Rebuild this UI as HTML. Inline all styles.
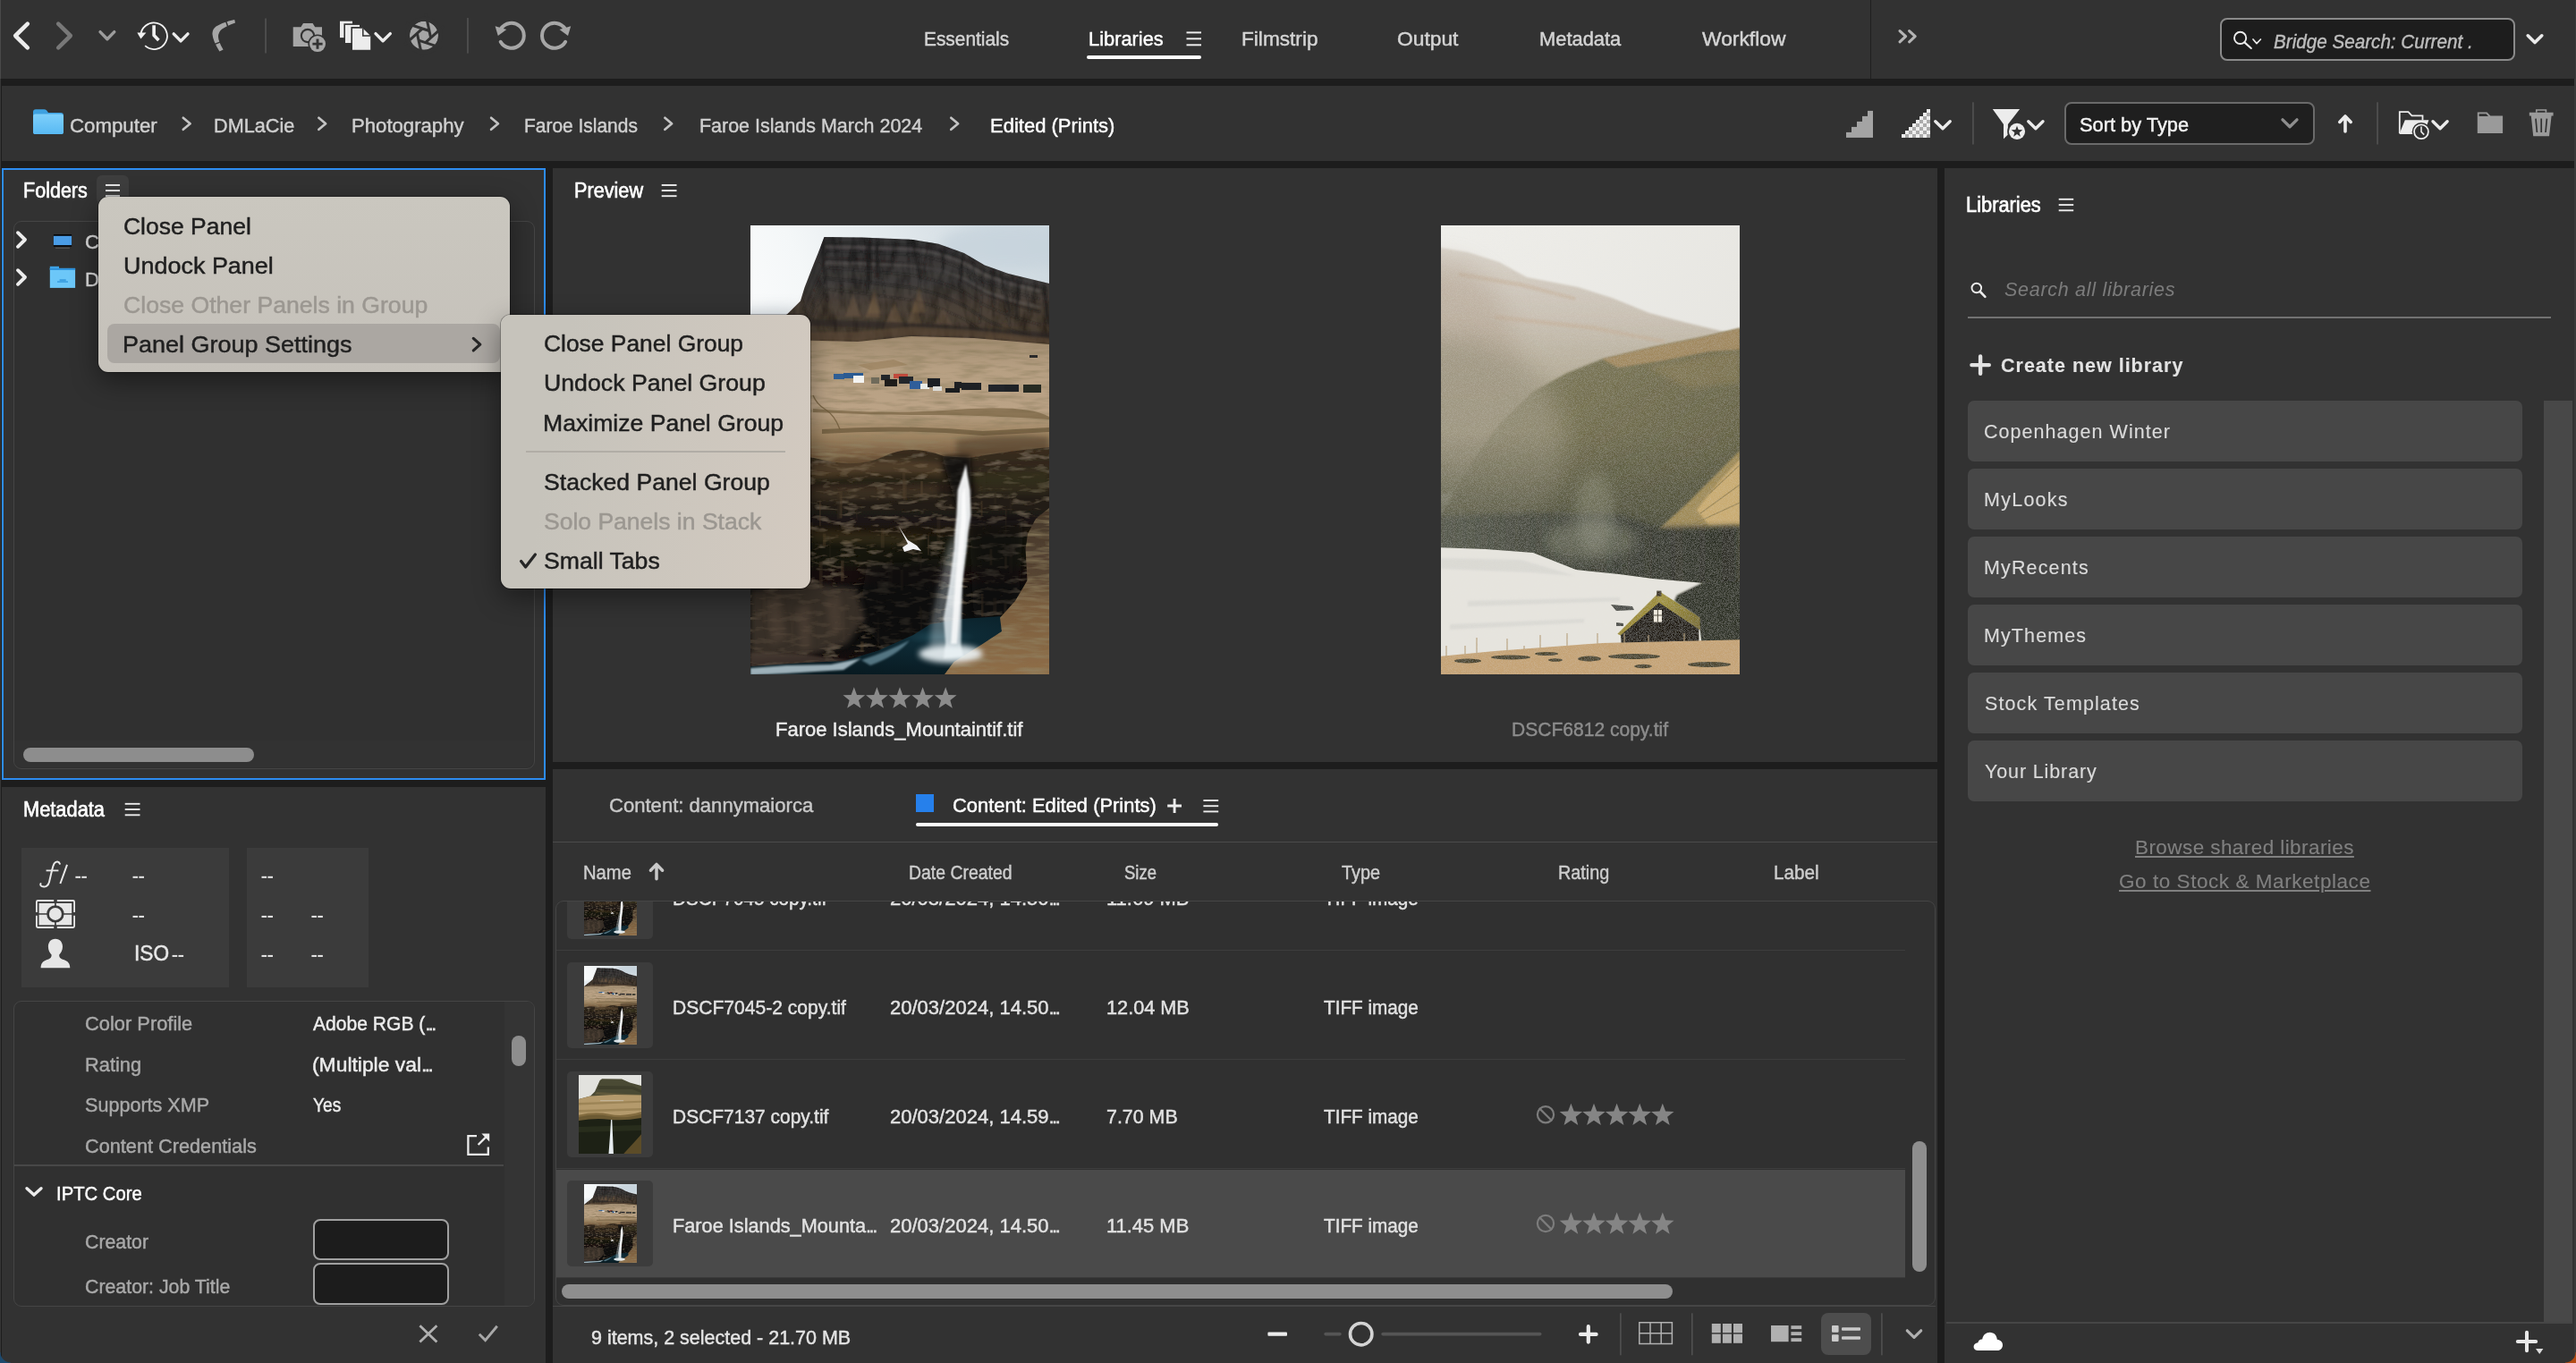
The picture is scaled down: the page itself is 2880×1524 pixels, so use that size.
<!DOCTYPE html><html lang="en"><head><meta charset="utf-8"><title>Adobe Bridge</title><style>
*{box-sizing:border-box;margin:0;padding:0}
html,body{width:2880px;height:1524px;overflow:hidden;background:#1d1d1d;font-family:"Liberation Sans",sans-serif;}
#app{position:absolute;left:0;top:0;width:2880px;height:1524px;overflow:hidden;background:#1d1d1d}
.b{position:absolute}
.p{position:absolute;background:#323232}
.t{position:absolute;white-space:nowrap;line-height:1;transform-origin:0 0;display:block}
.thumb{position:absolute;left:13px;width:96.2px;height:96px;background:#3c3c3c;border-radius:5px}
.sep{position:absolute;left:0;width:1508.5px;height:1.6px;background:#3d3d3d}
.lib{position:absolute;left:2200px;width:620px;height:67.6px;background:#474747;border-radius:7px}
</style></head><body><div id="app">
<div class="b" style="left:0;top:0;width:1.1px;height:1524px;background:#363636"></div>
<div class="b" style="left:2878.4px;top:0;width:1.6px;height:1524px;background:#3a3a3a"></div>
<div class="p" style="left:1.2px;top:0;width:2877.4px;height:88px"></div>
<div class="b" style="left:0;top:0;width:1.1px;height:88px;background:#494949"></div>
<div class="b" style="left:2090.6px;top:0;width:1.4px;height:88px;background:#1f1f1f"></div>
<div class="p" style="left:2px;top:96px;width:2876.4px;height:84px"></div>
<div class="b" style="left:2482px;top:20px;width:330px;height:47.6px;border:2px solid #8a8a8a;border-radius:8px;background:#1d1d1d"></div>
<div class="b" style="left:2308px;top:114.4px;width:280px;height:47.4px;border:2.2px solid #6a6a6a;border-radius:8px;background:#1f1f1f"></div>
<div class="b" style="left:1215px;top:62px;width:127.8px;height:4.2px;border-radius:2.1px;background:#fff"></div>
<div class="p" style="left:2px;top:188px;width:608.4px;height:684px;border:2.3px solid #2d8cf0"></div>
<div class="b" style="left:108.4px;top:196px;width:35.6px;height:31.5px;border-radius:6px;background:#3e3e3e"></div>
<div class="b" style="left:14.5px;top:246.5px;width:583.5px;height:613px;border:1.7px solid #454545;border-radius:9px;background:#303030"></div>
<div class="b" style="left:16px;top:828px;width:580px;height:30px;background:#323232;border-radius:0 0 8px 8px"></div>
<div class="b" style="left:25.7px;top:835.8px;width:258.5px;height:16.2px;border-radius:8.1px;background:#8d8d8d"></div>
<div class="p" style="left:1.6px;top:880px;width:608.8px;height:644px"></div>
<div class="b" style="left:24.3px;top:948.2px;width:231.6px;height:155.5px;background:#3b3b3b"></div>
<div class="b" style="left:276.2px;top:948.2px;width:135.8px;height:155.5px;background:#3b3b3b"></div>
<div class="b" style="left:14.5px;top:1119.2px;width:583.5px;height:342px;border:1.7px solid #454545;border-radius:9px;background:#303030;overflow:hidden"><div class="b" style="left:548.6px;top:0;width:34px;height:342px;background:#343434"></div></div>
<div class="b" style="left:16px;top:1301.9px;width:546.6px;height:1.7px;background:#484848"></div>
<div class="b" style="left:572px;top:1158px;width:15.8px;height:33.6px;border-radius:7.9px;background:#8d8d8d"></div>
<div class="b" style="left:350px;top:1362.5px;width:151.8px;height:46.6px;border:2px solid #a0a0a0;border-radius:8px;background:#1c1c1c"></div>
<div class="b" style="left:350px;top:1412.4px;width:151.8px;height:46.8px;border:2px solid #a0a0a0;border-radius:8px;background:#1c1c1c"></div>
<div class="p" style="left:618.2px;top:188px;width:1547.8px;height:664px"></div>
<svg width="0" height="0" style="position:absolute"><defs><linearGradient id="p1sky" x1="0" y1="0.6" x2="1" y2="0"><stop offset="0" stop-color="#ffffff"/><stop offset="0.35" stop-color="#f4f7f8"/><stop offset="0.7" stop-color="#dbe3e8"/><stop offset="1" stop-color="#cdd8df"/></linearGradient><linearGradient id="p1mt" x1="0" y1="0" x2="0" y2="1"><stop offset="0" stop-color="#343335"/><stop offset="0.4" stop-color="#413e3c"/><stop offset="0.65" stop-color="#4c4238"/><stop offset="0.88" stop-color="#453a30"/><stop offset="1" stop-color="#65523c"/></linearGradient><linearGradient id="p1fd" x1="0" y1="0" x2="0" y2="1"><stop offset="0" stop-color="#a08b70"/><stop offset="0.25" stop-color="#b7a083"/><stop offset="0.55" stop-color="#bba386"/><stop offset="0.75" stop-color="#9f8563"/><stop offset="0.9" stop-color="#775c40"/><stop offset="1" stop-color="#483726"/></linearGradient><linearGradient id="p1cl" x1="0" y1="0" x2="0" y2="1"><stop offset="0" stop-color="#3a2e20"/><stop offset="0.15" stop-color="#272017"/><stop offset="0.4" stop-color="#191510"/><stop offset="0.7" stop-color="#0e0d0b"/><stop offset="1" stop-color="#13110e"/></linearGradient><linearGradient id="p1rc" x1="0" y1="0" x2="0" y2="1"><stop offset="0" stop-color="#46382b"/><stop offset="0.4" stop-color="#564433"/><stop offset="0.58" stop-color="#7a5e3f"/><stop offset="1" stop-color="#8f6e48"/></linearGradient><linearGradient id="p1wf" x1="0" y1="0" x2="0" y2="1"><stop offset="0" stop-color="#ffffff" stop-opacity="0.95"/><stop offset="0.5" stop-color="#eef3f6" stop-opacity="0.9"/><stop offset="1" stop-color="#dfe9ee" stop-opacity="0.75"/></linearGradient><radialGradient id="p1sea" cx="0.72" cy="0.35" r="0.7"><stop offset="0" stop-color="#1e4552"/><stop offset="0.2" stop-color="#0e2a35"/><stop offset="1" stop-color="#081a21"/></radialGradient><filter id="b1" x="-20%" y="-20%" width="140%" height="140%"><feGaussianBlur stdDeviation="1.2"/></filter><filter id="b07" x="-5%" y="-5%" width="110%" height="110%"><feGaussianBlur stdDeviation="0.8"/></filter><filter id="b2" x="-30%" y="-30%" width="160%" height="160%"><feGaussianBlur stdDeviation="3"/></filter><filter id="b6" x="-40%" y="-40%" width="180%" height="180%"><feGaussianBlur stdDeviation="7"/></filter><filter id="b12" x="-50%" y="-50%" width="200%" height="200%"><feGaussianBlur stdDeviation="14"/></filter><filter id="rock" x="0" y="0" width="100%" height="100%"><feTurbulence type="fractalNoise" baseFrequency="0.09 0.035" numOctaves="3" seed="7" result="n"/><feColorMatrix in="n" type="matrix" values="0 0 0 0 0  0 0 0 0 0  0 0 0 0 0  1.3 0 0 0 -0.5" result="a"/><feComposite in="a" in2="SourceGraphic" operator="in" result="d"/><feMerge><feMergeNode in="SourceGraphic"/><feMergeNode in="d"/></feMerge></filter><filter id="rockl" x="0" y="0" width="100%" height="100%"><feTurbulence type="fractalNoise" baseFrequency="0.05 0.16" numOctaves="3" seed="11" result="n"/><feColorMatrix in="n" type="matrix" values="0 0 0 0 0.38  0 0 0 0 0.30  0 0 0 0 0.21  1.0 0 0 0 -0.52" result="a"/><feComposite in="a" in2="SourceGraphic" operator="in" result="d"/><feMerge><feMergeNode in="SourceGraphic"/><feMergeNode in="d"/></feMerge></filter><filter id="grass" x="0" y="0" width="100%" height="100%"><feTurbulence type="fractalNoise" baseFrequency="0.03 0.2" numOctaves="3" seed="3" result="n"/><feColorMatrix in="n" type="matrix" values="0 0 0 0 0.28  0 0 0 0 0.22  0 0 0 0 0.12  1.7 0 0 0 -0.7" result="a"/><feComposite in="a" in2="SourceGraphic" operator="in" result="d"/><feMerge><feMergeNode in="SourceGraphic"/><feMergeNode in="d"/></feMerge></filter><filter id="grain" x="0" y="0" width="100%" height="100%"><feTurbulence type="fractalNoise" baseFrequency="1.3" numOctaves="2" seed="5" result="n"/><feColorMatrix in="n" type="matrix" values="0 0 0 0 0.8  0 0 0 0 0.8  0 0 0 0 0.75  0.32 0 0 0 -0.11" result="a"/><feComposite in="a" in2="SourceGraphic" operator="in" result="d"/><feMerge><feMergeNode in="SourceGraphic"/><feMergeNode in="d"/></feMerge></filter><symbol id="ph1" viewBox="0 0 334 502" preserveAspectRatio="none"><rect width="334" height="502" fill="url(#p1sky)"/><ellipse cx="30" cy="112" rx="55" ry="20" fill="#e4eaee" filter="url(#b6)"/><ellipse cx="290" cy="24" rx="80" ry="26" fill="#c6d3dc" filter="url(#b6)" opacity="0.8"/><g filter="url(#rock)"><path d="M0,131 L22,112 L41.5,99 L56,84.5 L60.6,69.3 L71,42.6 L77.8,25.4 L82.5,13 L124.5,13.6 L181.7,15.9 L210.3,20.7 L238.9,31.1 L261.8,44.5 L288.5,54 L334,65.1 L334,140 L0,140 Z" fill="url(#p1mt)"/></g><clipPath id="mtclip"><path d="M0,131 L22,112 L41.5,99 L56,84.5 L60.6,69.3 L71,42.6 L77.8,25.4 L82.5,13 L124.5,13.6 L181.7,15.9 L210.3,20.7 L238.9,31.1 L261.8,44.5 L288.5,54 L334,65.1 L334,132 L0,132 Z"/></clipPath><g clip-path="url(#mtclip)"><g filter="url(#b07)"><path d="M60,78.3 L72,47.1 L84,20.0 L96,20.2 L108,20.4 L120,20.5 L132,20.9 L144,21.4 L156,21.9 L168,22.3 L180,22.8 L192,24.6 L204,26.6 L216,29.8 L228,34.1 L240,38.7 L252,45.8 L264,52.3 L276,56.6 L288,60.8 L300,63.8 L312,66.7 L324,69.7" stroke="#1d1c1c" stroke-width="2.2" fill="none" opacity="0.55"/><path d="M60,85.8 L72,54.9 L84,28.1 L96,28.5 L108,28.9 L120,29.3 L132,29.9 L144,30.6 L156,31.3 L168,32.1 L180,32.8 L192,34.8 L204,37.1 L216,40.5 L228,45.1 L240,49.9 L252,57.2 L264,63.9 L276,68.4 L288,72.9 L300,76.2 L312,79.3 L324,82.5" stroke="#1d1c1c" stroke-width="1.6" fill="none" opacity="0.45"/><path d="M60,94.4 L72,63.7 L84,37.1 L96,37.8 L108,38.4 L120,39.1 L132,39.9 L144,40.9 L156,41.8 L168,42.8 L180,43.8 L192,46.0 L204,48.5 L216,52.1 L228,57.0 L240,62.1 L252,69.6 L264,76.6 L276,81.3 L288,86.1 L300,89.5 L312,92.9 L324,96.3" stroke="#1d1c1c" stroke-width="2.6" fill="none" opacity="0.5"/><path d="M60,104.0 L72,73.5 L84,47.1 L96,48.0 L108,48.9 L120,49.8 L132,50.9 L144,52.1 L156,53.3 L168,54.5 L180,55.7 L192,58.2 L204,61.0 L216,64.8 L228,69.9 L240,75.2 L252,83.0 L264,90.2 L276,95.2 L288,100.2 L300,103.9 L312,107.5 L324,111.2" stroke="#1d1c1c" stroke-width="1.8" fill="none" opacity="0.4"/><path d="M60,115.5 L72,85.3 L84,59.2 L96,60.3 L108,61.4 L120,62.6 L132,63.9 L144,65.3 L156,66.8 L168,68.2 L180,69.7 L192,72.4 L204,75.4 L216,79.5 L228,84.8 L240,90.4 L252,98.4 L264,105.8 L276,111.1 L288,116.3 L300,120.2 L312,124.1 L324,128.0" stroke="#1d1c1c" stroke-width="2.4" fill="none" opacity="0.45"/><path d="M60,127.1 L72,97.1 L84,71.2 L96,72.6 L108,74.0 L120,75.3 L132,76.9 L144,78.6 L156,80.3 L168,81.9 L180,83.6 L192,86.6 L204,89.8 L216,94.2 L228,99.7 L240,105.5 L252,113.8 L264,121.5 L276,127.0 L288,132.4 L300,136.6 L312,140.7 L324,144.9" stroke="#1d1c1c" stroke-width="1.6" fill="none" opacity="0.35"/><path d="M84,24.0 L96,24.2 L108,24.4 L120,24.5 L132,24.9 L144,25.4 L156,25.9 L168,26.3 L180,26.8 L192,28.6 L204,30.6 L216,33.8 L228,38.1 L240,42.7 L252,49.8 L264,56.3 L276,60.6 L288,64.8 L300,67.8 L312,70.7 L324,73.7" stroke="#77736f" stroke-width="3" fill="none" opacity="0.35"/><path d="M84,42.0 L96,42.2 L108,42.4 L120,42.5 L132,42.9 L144,43.4 L156,43.9 L168,44.3 L180,44.8 L192,46.6 L204,48.6 L216,51.8 L228,56.1 L240,60.7 L252,67.8 L264,74.3 L276,78.6 L288,82.8 L300,85.8 L312,88.7 L324,91.7" stroke="#77736f" stroke-width="3" fill="none" opacity="0.3"/><path d="M237.7,31.8 L235.3,61.4" stroke="#1b1a1a" stroke-width="2.7" opacity="0.50" stroke-linecap="round"/><path d="M302.4,59.0 L296.9,94.7" stroke="#1b1a1a" stroke-width="1.6" opacity="0.45" stroke-linecap="round"/><path d="M80.8,19.9 L83.5,65.2" stroke="#1b1a1a" stroke-width="1.6" opacity="0.48" stroke-linecap="round"/><path d="M281.2,52.5 L286.4,104.3" stroke="#1b1a1a" stroke-width="1.9" opacity="0.35" stroke-linecap="round"/><path d="M319.0,64.8 L314.6,86.7" stroke="#1b1a1a" stroke-width="2.9" opacity="0.48" stroke-linecap="round"/><path d="M280.6,57.3 L290.2,97.8" stroke="#1b1a1a" stroke-width="2.0" opacity="0.47" stroke-linecap="round"/><path d="M286.3,58.6 L289.6,112.7" stroke="#1b1a1a" stroke-width="2.6" opacity="0.31" stroke-linecap="round"/><path d="M132.3,16.9 L130.1,38.3" stroke="#1b1a1a" stroke-width="1.4" opacity="0.38" stroke-linecap="round"/><path d="M236.7,33.9 L234.1,67.4" stroke="#1b1a1a" stroke-width="1.7" opacity="0.58" stroke-linecap="round"/><path d="M239.9,36.9 L245.6,62.1" stroke="#1b1a1a" stroke-width="1.5" opacity="0.41" stroke-linecap="round"/><path d="M327.3,68.9 L332.3,110.3" stroke="#1b1a1a" stroke-width="2.9" opacity="0.53" stroke-linecap="round"/><path d="M132.6,15.2 L130.9,46.4" stroke="#1b1a1a" stroke-width="1.6" opacity="0.58" stroke-linecap="round"/><path d="M298.4,59.6 L298.7,105.1" stroke="#1b1a1a" stroke-width="3.0" opacity="0.44" stroke-linecap="round"/><path d="M141.8,17.0 L140.0,58.6" stroke="#1b1a1a" stroke-width="2.4" opacity="0.57" stroke-linecap="round"/><path d="M176.2,18.2 L178.4,78.1" stroke="#1b1a1a" stroke-width="1.4" opacity="0.31" stroke-linecap="round"/><path d="M102.1,18.7 L102.8,69.9" stroke="#1b1a1a" stroke-width="1.3" opacity="0.41" stroke-linecap="round"/><path d="M329.0,68.6 L336.8,127.4" stroke="#1b1a1a" stroke-width="1.2" opacity="0.52" stroke-linecap="round"/><path d="M248.5,41.5 L252.8,70.7" stroke="#1b1a1a" stroke-width="1.4" opacity="0.43" stroke-linecap="round"/><path d="M190.2,25.0 L188.4,79.8" stroke="#1b1a1a" stroke-width="2.2" opacity="0.35" stroke-linecap="round"/><path d="M307.6,65.8 L311.9,96.3" stroke="#1b1a1a" stroke-width="2.4" opacity="0.35" stroke-linecap="round"/><path d="M269.2,51.9 L271.7,102.6" stroke="#1b1a1a" stroke-width="1.2" opacity="0.40" stroke-linecap="round"/><path d="M79.0,29.8 L86.3,84.7" stroke="#1b1a1a" stroke-width="1.8" opacity="0.32" stroke-linecap="round"/><path d="M298.8,64.1 L300.5,85.7" stroke="#1b1a1a" stroke-width="1.3" opacity="0.53" stroke-linecap="round"/><path d="M270.1,49.3 L272.9,87.3" stroke="#1b1a1a" stroke-width="1.7" opacity="0.56" stroke-linecap="round"/><path d="M182.3,18.5 L188.0,59.1" stroke="#1b1a1a" stroke-width="1.6" opacity="0.39" stroke-linecap="round"/><path d="M328.8,69.4 L331.0,105.8" stroke="#1b1a1a" stroke-width="1.4" opacity="0.37" stroke-linecap="round"/><path d="M160.5,20.2 L158.1,47.8" stroke="#1b1a1a" stroke-width="1.3" opacity="0.49" stroke-linecap="round"/><path d="M132.6,21.3 L127.7,75.4" stroke="#1b1a1a" stroke-width="1.7" opacity="0.50" stroke-linecap="round"/><path d="M128.8,15.7 L132.0,73.0" stroke="#1b1a1a" stroke-width="2.1" opacity="0.54" stroke-linecap="round"/><path d="M280.7,53.6 L281.6,75.6" stroke="#1b1a1a" stroke-width="2.0" opacity="0.44" stroke-linecap="round"/><path d="M260.6,49.5 L256.2,108.9" stroke="#1b1a1a" stroke-width="2.0" opacity="0.40" stroke-linecap="round"/><path d="M294.6,58.2 L295.8,84.2" stroke="#1b1a1a" stroke-width="2.0" opacity="0.38" stroke-linecap="round"/><path d="M138.0,21.6 L145.7,58.2" stroke="#1b1a1a" stroke-width="2.3" opacity="0.32" stroke-linecap="round"/><path d="M329.8,70.9 L338.6,129.6" stroke="#1b1a1a" stroke-width="2.9" opacity="0.35" stroke-linecap="round"/><path d="M198.3,21.2 L193.3,56.0" stroke="#1b1a1a" stroke-width="2.0" opacity="0.60" stroke-linecap="round"/><path d="M141.9,20.8 L142.7,57.9" stroke="#1b1a1a" stroke-width="3.1" opacity="0.60" stroke-linecap="round"/><path d="M216.3,28.9 L215.0,53.4" stroke="#1b1a1a" stroke-width="3.1" opacity="0.47" stroke-linecap="round"/><path d="M212.8,27.8 L216.1,48.2" stroke="#1b1a1a" stroke-width="2.2" opacity="0.56" stroke-linecap="round"/><path d="M114.3,21.2 L111.3,42.5" stroke="#1b1a1a" stroke-width="2.4" opacity="0.50" stroke-linecap="round"/><path d="M134.2,15.8 L132.2,71.2" stroke="#1b1a1a" stroke-width="2.4" opacity="0.49" stroke-linecap="round"/><path d="M181.3,21.0 L190.3,60.9" stroke="#1b1a1a" stroke-width="1.6" opacity="0.51" stroke-linecap="round"/><path d="M135.1,17.8 L133.9,64.0" stroke="#1b1a1a" stroke-width="1.8" opacity="0.53" stroke-linecap="round"/><path d="M92.6,17.4 L102.5,77.3" stroke="#1b1a1a" stroke-width="1.3" opacity="0.36" stroke-linecap="round"/><path d="M141.9,21.8 L150.0,76.8" stroke="#1b1a1a" stroke-width="1.9" opacity="0.35" stroke-linecap="round"/><path d="M287.4,59.5 L297.2,103.2" stroke="#1b1a1a" stroke-width="2.5" opacity="0.30" stroke-linecap="round"/><path d="M283.2,55.2 L292.2,101.1" stroke="#1b1a1a" stroke-width="1.5" opacity="0.33" stroke-linecap="round"/><path d="M114.6,77.6 L123.3,102.1 L106.0,102.1 Z" fill="#7d6548" opacity="0.34"/><path d="M136.8,80.0 L145.4,102.9 L128.2,102.9 Z" fill="#7d6548" opacity="0.38"/><path d="M284.6,106.6 L294.1,126.5 L275.1,126.5 Z" fill="#7d6548" opacity="0.20"/><path d="M267.4,112.5 L275.9,138.9 L258.8,138.9 Z" fill="#7d6548" opacity="0.31"/><path d="M188.4,69.2 L195.8,97.6 L180.9,97.6 Z" fill="#7d6548" opacity="0.38"/><path d="M215.5,92.9 L226.0,111.0 L205.0,111.0 Z" fill="#7d6548" opacity="0.23"/><path d="M160.9,86.8 L172.7,114.9 L149.1,114.9 Z" fill="#7d6548" opacity="0.38"/><path d="M138.3,71.6 L145.9,98.6 L130.7,98.6 Z" fill="#7d6548" opacity="0.38"/><path d="M183.5,81.9 L191.4,110.9 L175.5,110.9 Z" fill="#7d6548" opacity="0.37"/></g></g><path d="M56,104 L200,110 L334,120 L334,127 L200,117 L56,112 Z" fill="#262422" opacity="0.55" filter="url(#b1)"/><g filter="url(#grass)"><path d="M0,133 L40,128 L120,130 L180,124 L250,126 L334,133 L334,272 L0,272 Z" fill="url(#p1fd)"/></g><path d="M40,128 L120,129 L180,123 L250,125 L334,132 L334,126 L250,117 L180,113 L120,119 L40,120 Z" fill="#5e4c38" opacity="0.6" filter="url(#b1)"/><path d="M70,205 Q150,212 230,206 T334,214 L334,217 Q260,212 200,212 T70,209 Z" fill="#6e5a38" opacity="0.6"/><path d="M80,228 Q170,222 260,230 L334,226 L334,231 L260,235 Q170,227 80,233 Z" fill="#5e4c30" opacity="0.6"/><path d="M70,190 Q74,200 84,206 T100,228" stroke="#6e5a3a" stroke-width="1.4" fill="none" opacity="0.8"/><path d="M120,156 L160,150 L176,156 L134,162 Z" fill="#8f7550" opacity="0.5"/><path d="M230,240 Q280,232 334,236 L334,262 L230,262 Z" fill="#4a3826" opacity="0.55" filter="url(#b2)"/><rect x="93" y="166" width="12" height="6" fill="#2f5f96"/><rect x="104" y="165" width="22" height="6" fill="#2a5a92"/><rect x="115" y="168" width="12" height="8" fill="#f4f4f2"/><rect x="135" y="170" width="9" height="7" fill="#6f6a5a"/><rect x="146" y="167" width="10" height="6" fill="#22262a"/><rect x="150" y="172" width="14" height="8" fill="#1f1c1a"/><rect x="160" y="166" width="16" height="5" fill="#c04a3c"/><rect x="166" y="169" width="16" height="8" fill="#23262b"/><rect x="178" y="174" width="14" height="9" fill="#2f5e9a"/><rect x="190" y="177" width="10" height="6" fill="#e9ece8"/><rect x="198" y="171" width="14" height="10" fill="#1c1f24"/><rect x="204" y="180" width="10" height="5" fill="#dcdcd8"/><rect x="218" y="182" width="16" height="5" fill="#1a1c1e"/><rect x="228" y="175" width="8" height="7" fill="#1d1f22"/><rect x="236" y="176" width="22" height="8" fill="#1e2024"/><rect x="266" y="178" width="18" height="8" fill="#22252a"/><rect x="284" y="178" width="16" height="8" fill="#1f2226"/><rect x="305" y="178" width="20" height="9" fill="#262a22"/><rect x="312" y="145" width="9" height="3" fill="#2a2a2a"/><g filter="url(#rockl)"><path d="M0,264 Q40,252 80,262 T150,258 T216,258 L244,260 Q290,252 334,248 L334,502 L0,502 Z" fill="url(#p1cl)"/></g><g><rect x="100.4" y="301.9" width="1.7" height="25.6" fill="#4a3b2a" opacity="0.38"/><rect x="18.0" y="372.5" width="2.6" height="10.9" fill="#4a3b2a" opacity="0.33"/><rect x="170.8" y="283.7" width="3.9" height="23.6" fill="#4a3b2a" opacity="0.45"/><rect x="123.0" y="465.3" width="3.6" height="11.1" fill="#55432e" opacity="0.40"/><rect x="167.6" y="385.0" width="3.2" height="23.4" fill="#4a3b2a" opacity="0.45"/><rect x="198.1" y="345.7" width="1.7" height="23.1" fill="#4a3b2a" opacity="0.47"/><rect x="153.9" y="377.3" width="2.7" height="28.7" fill="#2e261d" opacity="0.38"/><rect x="77.0" y="307.6" width="1.7" height="28.7" fill="#55432e" opacity="0.43"/><rect x="271.3" y="416.4" width="4.0" height="16.9" fill="#4a3b2a" opacity="0.43"/><rect x="51.1" y="339.7" width="2.6" height="32.4" fill="#4a3b2a" opacity="0.52"/><rect x="177.6" y="445.3" width="3.2" height="17.5" fill="#2e261d" opacity="0.45"/><rect x="141.4" y="438.3" width="2.7" height="32.7" fill="#4a3b2a" opacity="0.27"/><rect x="88.2" y="348.4" width="1.6" height="26.0" fill="#2e261d" opacity="0.37"/><rect x="189.4" y="369.8" width="2.2" height="15.2" fill="#3c3024" opacity="0.39"/><rect x="284.2" y="370.3" width="2.5" height="14.0" fill="#55432e" opacity="0.56"/><rect x="254.0" y="443.1" width="2.5" height="16.7" fill="#55432e" opacity="0.49"/><rect x="117.9" y="317.7" width="1.9" height="12.0" fill="#3c3024" opacity="0.25"/><rect x="257.6" y="308.1" width="1.9" height="16.8" fill="#55432e" opacity="0.46"/><rect x="98.8" y="296.8" width="3.9" height="30.6" fill="#4a3b2a" opacity="0.41"/><rect x="270.0" y="460.5" width="2.9" height="26.3" fill="#2e261d" opacity="0.39"/><rect x="32.1" y="397.6" width="1.7" height="11.5" fill="#3c3024" opacity="0.40"/><rect x="34.1" y="390.9" width="2.9" height="12.5" fill="#4a3b2a" opacity="0.58"/><rect x="190.3" y="285.9" width="2.4" height="15.0" fill="#55432e" opacity="0.58"/><rect x="186.7" y="365.9" width="2.7" height="12.8" fill="#2e261d" opacity="0.42"/><rect x="96.7" y="300.5" width="3.4" height="28.0" fill="#2e261d" opacity="0.54"/><rect x="50.0" y="276.6" width="2.8" height="32.8" fill="#3c3024" opacity="0.49"/><rect x="283.4" y="422.1" width="3.1" height="17.2" fill="#4a3b2a" opacity="0.49"/><rect x="80.9" y="344.6" width="3.4" height="14.0" fill="#55432e" opacity="0.47"/><rect x="190.1" y="428.1" width="2.0" height="28.2" fill="#3c3024" opacity="0.54"/><rect x="9.0" y="277.5" width="2.1" height="16.7" fill="#55432e" opacity="0.41"/><rect x="290.5" y="467.6" width="2.4" height="32.9" fill="#3c3024" opacity="0.29"/><rect x="145.7" y="338.9" width="4.0" height="21.6" fill="#4a3b2a" opacity="0.42"/><rect x="202.4" y="430.3" width="3.2" height="12.0" fill="#2e261d" opacity="0.52"/><rect x="103.1" y="430.6" width="2.5" height="33.3" fill="#2e261d" opacity="0.51"/><rect x="26.3" y="303.5" width="1.6" height="33.8" fill="#2e261d" opacity="0.53"/><rect x="45.3" y="435.6" width="3.1" height="33.5" fill="#55432e" opacity="0.30"/><rect x="170.0" y="276.2" width="3.3" height="29.2" fill="#4a3b2a" opacity="0.43"/><rect x="289.4" y="357.9" width="3.6" height="30.9" fill="#3c3024" opacity="0.26"/><rect x="66.0" y="371.2" width="2.3" height="28.3" fill="#2e261d" opacity="0.54"/><rect x="18.9" y="418.5" width="3.2" height="31.5" fill="#2e261d" opacity="0.54"/><rect x="272.2" y="297.9" width="2.8" height="13.6" fill="#2e261d" opacity="0.52"/><rect x="188.7" y="425.7" width="1.9" height="13.6" fill="#4a3b2a" opacity="0.44"/><rect x="101.1" y="374.6" width="3.5" height="23.3" fill="#4a3b2a" opacity="0.56"/><rect x="17.6" y="309.9" width="1.7" height="11.0" fill="#2e261d" opacity="0.45"/><rect x="156.7" y="373.4" width="2.6" height="26.6" fill="#2e261d" opacity="0.43"/><rect x="76.8" y="375.6" width="3.8" height="31.0" fill="#3c3024" opacity="0.54"/><rect x="42.5" y="296.1" width="1.7" height="20.6" fill="#3c3024" opacity="0.40"/><rect x="65.9" y="332.0" width="3.4" height="12.9" fill="#55432e" opacity="0.30"/><rect x="273.7" y="463.6" width="3.9" height="15.3" fill="#2e261d" opacity="0.56"/><rect x="50.5" y="404.2" width="3.3" height="15.4" fill="#2e261d" opacity="0.37"/><rect x="60.7" y="335.1" width="1.5" height="27.3" fill="#2e261d" opacity="0.40"/><rect x="5.6" y="337.6" width="2.8" height="25.0" fill="#4a3b2a" opacity="0.29"/><rect x="284.7" y="317.3" width="1.7" height="31.0" fill="#55432e" opacity="0.26"/><rect x="282.5" y="434.2" width="1.9" height="16.2" fill="#2e261d" opacity="0.50"/><rect x="27.7" y="283.4" width="2.6" height="26.5" fill="#4a3b2a" opacity="0.34"/><rect x="5.2" y="289.5" width="3.0" height="16.3" fill="#3c3024" opacity="0.27"/><rect x="267.5" y="361.8" width="2.9" height="18.1" fill="#55432e" opacity="0.47"/><rect x="13.4" y="412.5" width="3.9" height="32.5" fill="#55432e" opacity="0.27"/><rect x="62.5" y="333.8" width="3.4" height="17.3" fill="#55432e" opacity="0.41"/><rect x="208.4" y="325.6" width="4.0" height="29.3" fill="#4a3b2a" opacity="0.26"/><rect x="289.7" y="293.0" width="2.6" height="29.7" fill="#2e261d" opacity="0.44"/><rect x="275.5" y="464.1" width="2.0" height="17.4" fill="#3c3024" opacity="0.37"/><rect x="258.0" y="411.9" width="2.5" height="25.3" fill="#55432e" opacity="0.59"/><rect x="259.5" y="274.8" width="3.7" height="25.0" fill="#2e261d" opacity="0.31"/></g><path d="M68,266 Q150,258 214,266 L214,280 Q150,274 68,284 Z" fill="#6a5236" opacity="0.5" filter="url(#b2)"/><path d="M68,292 L210,290 L210,304 L68,308 Z" fill="#54442f" opacity="0.45" filter="url(#b2)"/><path d="M68,340 L190,346 L190,358 L68,354 Z" fill="#4c3c24" opacity="0.45" filter="url(#b2)"/><path d="M250,276 L334,270 L334,300 L252,300 Z" fill="#3c3b22" opacity="0.45" filter="url(#b2)"/><path d="M214,258 L246,258 L248,300 L236,330 L226,300 Z" fill="#0c0b0a" opacity="0.8" filter="url(#b2)"/><path d="M130,380 L215,372 L205,470 L150,475 L120,440 Z" fill="#090909" opacity="0.7" filter="url(#b6)"/><path d="M244,330 L305,330 L300,430 L250,440 Z" fill="#0b0b0b" opacity="0.6" filter="url(#b6)"/><path d="M0,408 L60,400 L118,406 L128,440 L108,468 L60,482 L0,486 Z" fill="#42372f" opacity="0.8" filter="url(#b2)"/><path d="M18,420 L32,414 L40,462 L24,470 Z M84,418 L100,414 L104,452 L90,460 Z M52,428 L66,424 L68,472 L56,474 Z" fill="#5e4e40" opacity="0.4" filter="url(#b2)"/><path d="M0,478 L60,480 L110,486 L60,492 L0,494 Z" fill="#4a3c34" opacity="0.7" filter="url(#b1)"/><path d="M0,493 L60,489 L105,487 L144,475 L182,458 L201,446 L237,440 L280,437 L292,452 L262,472 L230,490 L217,503 L0,503 Z" fill="url(#p1sea)"/><path d="M0,495 L40,492 L90,491 L124,484 L104,497 L40,501 L0,503 Z" fill="#cfe3ec" opacity="0.75" filter="url(#b1)"/><path d="M124,486 Q152,477 178,464 Q164,481 134,492 Z" fill="#8fb8c8" opacity="0.55" filter="url(#b1)"/><g filter="url(#grass)"><path d="M334,316 L319,328 L310,345 L307.6,362 L309.5,397 L296,420 L279,438.7 L281,454 L258,469 L227.5,488 L217,502 L334,502 Z" fill="url(#p1rc)"/></g><path d="M203,440 L212,400 L220,362 L228,344 L232,400 L224,470 L200,474 Z" fill="#cfdde4" opacity="0.35" filter="url(#b2)"/><path d="M240.9,267 L242.8,280 L245.6,296 L246.6,324 L243.7,343 L241.8,362 L237,400 L236,439 L235.4,470 L238,482 L216,484 L218,467 L216,439 L222.7,400 L227.5,362 L228.5,343 L230.4,324 L231.7,296 L237,280 Z" fill="url(#p1wf)" filter="url(#b1)"/><path d="M240,292 L241.4,330 L236,400 L231,468 L224,468 L229,400 L235.4,330 L236.5,300 Z" fill="#ffffff" opacity="0.8" filter="url(#b1)"/><ellipse cx="224" cy="479" rx="36" ry="10" fill="#eef5f8" opacity="0.9" filter="url(#b2)"/><path d="M166,337 L176,352 L186,358 L191,364 L182,362 L172,365 L170,360 L176,356 Z" fill="#f2f2f4"/></symbol><linearGradient id="p2sky" x1="0" y1="0" x2="1" y2="1"><stop offset="0" stop-color="#efeeea"/><stop offset="1" stop-color="#e2e1dc"/></linearGradient><linearGradient id="p2far" x1="0" y1="0" x2="0" y2="1"><stop offset="0" stop-color="#d9d3ca"/><stop offset="0.3" stop-color="#c9c0b3"/><stop offset="0.6" stop-color="#aea58f"/><stop offset="1" stop-color="#8f8c6f"/></linearGradient><linearGradient id="p2hill" x1="0" y1="0" x2="1" y2="1"><stop offset="0" stop-color="#8b866c"/><stop offset="0.35" stop-color="#767150"/><stop offset="0.7" stop-color="#656243"/><stop offset="1" stop-color="#57583c"/></linearGradient><linearGradient id="p2shore" x1="0" y1="0" x2="1" y2="0"><stop offset="0" stop-color="#55584a"/><stop offset="0.5" stop-color="#3c3f34"/><stop offset="1" stop-color="#282a20"/></linearGradient><linearGradient id="p2roof" x1="0" y1="0" x2="1" y2="1"><stop offset="0" stop-color="#a89a3e"/><stop offset="1" stop-color="#75682a"/></linearGradient><linearGradient id="p2haze" x1="0" y1="0" x2="1" y2="0"><stop offset="0" stop-color="#aaa38f" stop-opacity="0.75"/><stop offset="0.35" stop-color="#a19c86" stop-opacity="0.4"/><stop offset="0.7" stop-color="#a19c86" stop-opacity="0"/></linearGradient><linearGradient id="p2low" x1="0" y1="0" x2="0" y2="1"><stop offset="0" stop-color="#4c4f38" stop-opacity="0"/><stop offset="1" stop-color="#3f4230" stop-opacity="0.7"/></linearGradient><symbol id="ph2" viewBox="0 0 334 502" preserveAspectRatio="none"><g filter="url(#grain)"><rect width="334" height="502" fill="url(#p2sky)"/><path d="M-6,20 L0,25 L30,30 L65,41 L96,58 L153,69 L191,81 L233,98 L275,109 L313,118 L340,122 L340,300 L-6,300 Z" fill="url(#p2far)" filter="url(#b1)"/><path d="M20,52 L90,64 L150,80 L150,84 L90,69 L20,57 Z M60,100 L170,112 L250,128 L250,132 L170,117 L60,105 Z" fill="#c4ab92" opacity="0.45" filter="url(#b1)"/><ellipse cx="0" cy="160" rx="85" ry="120" fill="#b3a391" opacity="0.55" filter="url(#b12)"/><path d="M340,113 L334,115 L294,124.6 L237,136 L180,149.4 L141.6,164.7 L103.4,185.6 L65.3,222 L42.4,253 L20,290 L-6,335 L-6,400 L340,400 Z" fill="url(#p2hill)" filter="url(#b1)"/><ellipse cx="0" cy="250" rx="140" ry="125" fill="#9a937d" opacity="0.72" filter="url(#b12)"/><rect x="0" y="230" width="334" height="110" fill="url(#p2low)"/><path d="M334,115 L294,124.6 L237,136 L180,149.4 L198,159 L250,151 L300,141 L334,139 Z" fill="#ad9063" opacity="0.8" filter="url(#b1)"/><path d="M230,158 L334,140 L334,176 L276,182 Z" fill="#8f7e54" opacity="0.5" filter="url(#b2)"/><path d="M334,252 L302,284 L275,311 L243,340 L275,346 L334,338 Z" fill="#9f8a55" filter="url(#b1)"/><path d="M334,262 L308,290 L286,318 L300,336 L334,334 Z" fill="#c9ab70" filter="url(#b1)"/><path d="M334,268 L300,300 M334,290 L290,322 M334,310 L282,334" stroke="#8a7848" stroke-width="1.2" opacity="0.7"/><path d="M-6,326 L100,322 L200,324 L243,338 L334,336 L334,470 L-6,470 Z" fill="url(#p2shore)" filter="url(#b2)"/><ellipse cx="168" cy="352" rx="52" ry="22" fill="#84866f" opacity="0.5" filter="url(#b6)"/><ellipse cx="172" cy="322" rx="22" ry="44" fill="#a9a998" opacity="0.32" filter="url(#b6)"/><path d="M-4,360 L50,362 L103,366 L151,385 L199,390 L237,395 L294,400 L266,414 L279,425 L288,439 L292,470 L-4,484 Z" fill="#e6e4de"/><path d="M0,372 L90,374 L150,392 L100,388 L0,384 Z M30,420 L200,416 L200,420 L30,426 Z M10,446 L160,440 L160,444 L10,452 Z" fill="#cfcfca" opacity="0.5" filter="url(#b1)"/><path d="M190,424 L214,426 L216,430 L196,431 Z M196,444 L204,445 L204,448 L196,448 Z" fill="#4a4c46"/><path d="M294,399 L264,413.5 L261,420 L292,441 L292,472 L340,472 L340,398 Z" fill="#2b2d23" filter="url(#b1)"/><path d="M242.7,420.6 L200.7,455.4 L201.7,467.6 L288.4,465 L288.4,451 Z" fill="#1c190f"/><path d="M244.6,409.6 L289.6,438.4 L289.8,452.4 L243.4,421.4 Z" fill="url(#p2roof)"/><path d="M244.6,409.6 L197.4,456.8 L200.6,458.6 L243.6,422 Z" fill="#9c8c36"/><rect x="241.2" y="408.6" width="5.2" height="6" fill="#3a3122"/><rect x="237.8" y="430" width="9.2" height="13.6" fill="#efe9de"/><path d="M242.4,430 V443.6 M237.8,436 H247" stroke="#3a3326" stroke-width="0.9"/><path d="M-4,482 L60,476 L180,467 L340,463 L340,506 L-4,506 Z" fill="#c5a375"/><ellipse cx="30" cy="487" rx="15" ry="2.4" fill="#3c3822" opacity="0.9"/><ellipse cx="78" cy="483" rx="22" ry="2.4" fill="#3c3822" opacity="0.9"/><ellipse cx="118" cy="479" rx="13" ry="2" fill="#3c3822" opacity="0.9"/><ellipse cx="128" cy="486" rx="8" ry="1.8" fill="#3c3822" opacity="0.9"/><ellipse cx="166" cy="484.5" rx="13" ry="3" fill="#3c3822" opacity="0.9"/><ellipse cx="216" cy="482" rx="29" ry="3" fill="#3c3822" opacity="0.9"/><ellipse cx="226" cy="493" rx="10" ry="2.2" fill="#3c3822" opacity="0.9"/><ellipse cx="300" cy="491" rx="24" ry="3" fill="#3c3822" opacity="0.9"/><path d="M6,470 V482" stroke="#b8a27e" stroke-width="1.2"/><path d="M27,470 V480" stroke="#b8a27e" stroke-width="1.2"/><path d="M40,461 V479" stroke="#b8a27e" stroke-width="1.2"/><path d="M74,462 V476" stroke="#b8a27e" stroke-width="1.2"/><path d="M93,470 V474" stroke="#b8a27e" stroke-width="1.2"/><path d="M111,458 V473" stroke="#b8a27e" stroke-width="1.2"/><path d="M141,456 V470" stroke="#b8a27e" stroke-width="1.2"/><path d="M175,456 V468" stroke="#b8a27e" stroke-width="1.2"/><path d="M205,456 V467" stroke="#b8a27e" stroke-width="1.2"/><path d="M232,458 V467" stroke="#b8a27e" stroke-width="1.2"/><path d="M272,456 V466" stroke="#b8a27e" stroke-width="1.2"/></g></symbol><symbol id="ph3" viewBox="0 0 70 88" preserveAspectRatio="none"><rect width="70" height="88" fill="#e2e2de"/><path d="M13,23.4 L18,18.6 L23.6,6 L26,4.2 L48,4.6 L57,8.4 L70,12 L70,27 L0,30 L0,27 Z" fill="#4a4a34"/><path d="M22,12 L60,12.6 L70,17 L70,20 L60,16 L21,16 Z" fill="#3a3a2a" opacity="0.7"/><path d="M20,19 L70,22 L70,25 L18,22 Z" fill="#6a603e" opacity="0.7"/><path d="M0,27 L13,23.4 L40,22 L70,22.6 L70,50 L0,50 Z" fill="#b49a6c"/><path d="M0,31 L70,28.6 L70,30.6 L0,33.4 Z M0,39 L70,37 L70,39.4 L0,41.6 Z" fill="#8c7648" opacity="0.6"/><rect x="24" y="28" width="26" height="1.2" fill="#d4d4d0" opacity="0.45"/><path d="M0,47 Q18,42.6 34,46 T70,43.6 L70,88 L0,88 Z" fill="#1d2115"/><path d="M0,44.6 Q18,40.2 34,43.6 T70,41 L70,48 Q50,51.4 34,49.6 T0,51 Z" fill="#7a6438" opacity="0.85"/><path d="M0,58 L70,56 L70,62 L0,64 Z" fill="#2e3320" opacity="0.7"/><path d="M36,50 L37.2,50 L38.8,88 L33.4,88 L35,66 Z" fill="#e6ecef"/><path d="M70,66 L62,75 L50,88 L70,88 Z" fill="#5c4c28"/></symbol></defs></svg>
<svg class="b" style="left:839px;top:252px" width="334" height="502"><use href="#ph1" width="334" height="502"/></svg>
<svg class="b" style="left:1611px;top:252px" width="334" height="502"><use href="#ph2" width="334" height="502"/></svg>
<div class="p" style="left:618.2px;top:860px;width:1547.8px;height:664px"></div>
<div class="b" style="left:618.2px;top:941px;width:1547.8px;height:1.3px;background:#4b4b4b"></div>
<div class="b" style="left:1024px;top:888px;width:20px;height:20px;background:#2680eb"></div>
<div class="b" style="left:1024px;top:920px;width:338.2px;height:4.2px;border-radius:2.1px;background:#fff"></div>
<div class="b" style="left:621px;top:1007px;width:1543px;height:452.6px;border-radius:9px;overflow:hidden;background:#303030">
<div class="b" style="left:0;top:300.6px;width:1508.5px;height:120.2px;background:#4a4a4a"></div>
<div class="sep" style="top:54.9px"></div>
<div class="sep" style="top:176.8px"></div>
<div class="sep" style="top:298.7px"></div>
<div class="sep" style="top:420.8px;background:#3a3a3a"></div>
<div class="thumb" style="top:-52.8px"></div>
<div class="thumb" style="top:69.1px"></div>
<div class="thumb" style="top:191.0px"></div>
<div class="thumb" style="top:312.9px"></div>
<svg class="b" style="left:31.5px;top:-48.9px" width="59" height="88"><use href="#ph1" width="59" height="88"/></svg><svg class="b" style="left:31.5px;top:73.0px" width="59" height="88"><use href="#ph1" width="59" height="88"/></svg><svg class="b" style="left:31.5px;top:316.8px" width="59" height="88"><use href="#ph1" width="59" height="88"/></svg><svg class="b" style="left:25.9px;top:194.9px" width="70.2" height="88.1"><use href="#ph3" width="70.2" height="88.1"/></svg>
<span class="t" style="left:130.58px;top:-17px;font-size:22.5px;line-height:29px;color:#e2e2e2;transform:scaleX(0.9202);-webkit-text-stroke:0.45px #e2e2e2;">DSCF7045 copy.tif</span><span class="t" style="left:373.72px;top:-17px;font-size:22.5px;line-height:29px;color:#e2e2e2;transform:scaleX(0.9786);-webkit-text-stroke:0.45px #e2e2e2;">20/03/2024, 14.50<span style="letter-spacing:-2.6px">...</span></span><span class="t" style="left:616.32px;top:-17px;font-size:22.5px;line-height:29px;color:#e2e2e2;transform:scaleX(0.9770);-webkit-text-stroke:0.45px #e2e2e2;">11.69 MB</span><span class="t" style="left:859.30px;top:-17px;font-size:22.5px;line-height:29px;color:#e2e2e2;transform:scaleX(0.9205);-webkit-text-stroke:0.45px #e2e2e2;">TIFF image</span><span class="t" style="left:130.56px;top:105px;font-size:22.5px;line-height:29px;color:#e2e2e2;transform:scaleX(0.9361);-webkit-text-stroke:0.45px #e2e2e2;">DSCF7045-2 copy.tif</span><span class="t" style="left:373.72px;top:105px;font-size:22.5px;line-height:29px;color:#e2e2e2;transform:scaleX(0.9786);-webkit-text-stroke:0.45px #e2e2e2;">20/03/2024, 14.50<span style="letter-spacing:-2.6px">...</span></span><span class="t" style="left:616.34px;top:105px;font-size:22.5px;line-height:29px;color:#e2e2e2;transform:scaleX(0.9640);-webkit-text-stroke:0.45px #e2e2e2;">12.04 MB</span><span class="t" style="left:859.30px;top:105px;font-size:22.5px;line-height:29px;color:#e2e2e2;transform:scaleX(0.9205);-webkit-text-stroke:0.45px #e2e2e2;">TIFF image</span><span class="t" style="left:130.57px;top:227px;font-size:22.5px;line-height:29px;color:#e2e2e2;transform:scaleX(0.9320);-webkit-text-stroke:0.45px #e2e2e2;">DSCF7137 copy.tif</span><span class="t" style="left:373.72px;top:227px;font-size:22.5px;line-height:29px;color:#e2e2e2;transform:scaleX(0.9786);-webkit-text-stroke:0.45px #e2e2e2;">20/03/2024, 14.59<span style="letter-spacing:-2.6px">...</span></span><span class="t" style="left:616.35px;top:227px;font-size:22.5px;line-height:29px;color:#e2e2e2;transform:scaleX(0.9513);-webkit-text-stroke:0.45px #e2e2e2;">7.70 MB</span><span class="t" style="left:859.30px;top:227px;font-size:22.5px;line-height:29px;color:#e2e2e2;transform:scaleX(0.9205);-webkit-text-stroke:0.45px #e2e2e2;">TIFF image</span><span class="t" style="left:130.53px;top:349px;font-size:22.5px;line-height:29px;color:#e2e2e2;transform:scaleX(0.9652);-webkit-text-stroke:0.45px #e2e2e2;">Faroe Islands_Mounta<span style="letter-spacing:-2.6px">...</span></span><span class="t" style="left:373.72px;top:349px;font-size:22.5px;line-height:29px;color:#e2e2e2;transform:scaleX(0.9786);-webkit-text-stroke:0.45px #e2e2e2;">20/03/2024, 14.50<span style="letter-spacing:-2.6px">...</span></span><span class="t" style="left:616.33px;top:349px;font-size:22.5px;line-height:29px;color:#e2e2e2;transform:scaleX(0.9749);-webkit-text-stroke:0.45px #e2e2e2;">11.45 MB</span><span class="t" style="left:859.30px;top:349px;font-size:22.5px;line-height:29px;color:#e2e2e2;transform:scaleX(0.9205);-webkit-text-stroke:0.45px #e2e2e2;">TIFF image</span>
<div class="b" style="left:7.3px;top:428.6px;width:1241.7px;height:16.2px;border-radius:8.1px;background:#8e8e8e"></div>
<div class="b" style="left:1517px;top:269px;width:16.2px;height:146px;border-radius:8.1px;background:#8e8e8e"></div>
</div>
<div class="b" style="left:621px;top:1007px;width:1543px;height:452.6px;border:1.7px solid #454545;border-radius:9px"></div>
<div class="b" style="left:618.2px;top:1459.8px;width:1546px;height:1.4px;background:#474747"></div>
<div class="b" style="left:2036.2px;top:1468.3px;width:55.6px;height:47.2px;border-radius:8px;background:#4d4d4d"></div>
<div class="p" style="left:2174px;top:188px;width:704.4px;height:1336px"></div>
<div class="b" style="left:2200px;top:354.4px;width:652px;height:1.6px;background:#727272"></div>
<div class="lib" style="top:448.3px"></div>
<div class="lib" style="top:524.2px"></div>
<div class="lib" style="top:600.2px"></div>
<div class="lib" style="top:676.1px"></div>
<div class="lib" style="top:752.1px"></div>
<div class="lib" style="top:828.0px"></div>
<div class="b" style="left:2844px;top:448.3px;width:32.4px;height:1031px;background:#484848"></div>
<div class="b" style="left:2176px;top:1478px;width:700.4px;height:2px;background:#464646"></div>
<div class="b" style="left:0;top:1512px;width:12px;height:12px;background:radial-gradient(circle at 12px 0,#0000 11px,#1e4a6e 12px)"></div>
<div class="b" style="left:2868px;top:1512px;width:12px;height:12px;background:radial-gradient(circle at 0 0,#0000 11px,#b34a12 12px)"></div>
<svg class="b" style="left:0;top:0" width="2880" height="1524" viewBox="0 0 2880 1524"><path d="M30.8,26.6 L17.2,40 L30.8,53.4" stroke="#ececec" stroke-width="4.6" fill="none" stroke-linecap="round" stroke-linejoin="round"/><path d="M65.2,26.6 L78.8,40 L65.2,53.4" stroke="#787878" stroke-width="4.6" fill="none" stroke-linecap="round" stroke-linejoin="round"/><path d="M112.0,35.6 L119.9,43.8 L127.8,35.6" stroke="#9c9c9c" stroke-width="3.4" fill="none" stroke-linecap="round" stroke-linejoin="round"/><path d="M157.3,40.5 A14.8,14.8 0 1 1 162.2,51.2" stroke="#f2f2f2" stroke-width="1.8" fill="none"/><polygon points="153.4,36.6 163.4,36.6 157.4,43.6" fill="#f2f2f2"/><path d="M172.1,28.2 L172.1,39.6 L177.4,45" stroke="#f2f2f2" stroke-width="3.6" fill="none" stroke-linecap="butt" stroke-linejoin="round"/><path d="M194.2,37.9 L202.1,45.9 L210.0,37.9" stroke="#ececec" stroke-width="3.4" fill="none" stroke-linecap="round" stroke-linejoin="round"/><path d="M262.2,22 Q250,24.2 241.6,29.4 Q237,33 237.5,38.4 Q238,45.4 245.4,57.4 L249.6,55.6 Q244.2,46.4 244,41.2 Q244,36 248.2,32.6 Q254.6,28.4 263,25.4 Z" fill="#a6a6a6"/><path d="M252.4,23 L255,30.4" stroke="#323232" stroke-width="1.5"/><path d="M239.6,49.6 L247.8,46.4" stroke="#323232" stroke-width="1.5"/><rect x="296.3" y="20.5" width="1.5" height="39" fill="#555"/><path d="M327.7,30.3 L336.4,30.3 L339,26 L349.6,26 L352.2,30.3 L360,30.3 L360,52 L327.7,52 Z" fill="#a6a6a6"/><circle cx="344" cy="40" r="8.2" fill="#323232"/><circle cx="344" cy="40" r="6.1" fill="#a6a6a6"/><circle cx="355" cy="49.1" r="10.6" fill="#323232"/><circle cx="355" cy="49.1" r="9" fill="#a6a6a6"/><path d="M349.4,49.1 H360.6 M355,43.5 V54.7" stroke="#323232" stroke-width="2.9"/><rect x="380" y="23.7" width="14" height="18.4" fill="#ececec"/><rect x="385.2" y="27.1" width="17.6" height="21.7" fill="#ececec" stroke="#323232" stroke-width="1.6"/><path d="M393.2,30.9 L406.1,30.9 L415,39.8 L415,56.6 L393.2,56.6 Z" fill="#ececec" stroke="#323232" stroke-width="1.6"/><path d="M405.8,31.7 L405.8,40 L414.2,40" fill="none" stroke="#323232" stroke-width="1.5"/><path d="M420.0,37.6 L428.1,45.7 L436.3,37.6" stroke="#ececec" stroke-width="3.4" fill="none" stroke-linecap="round" stroke-linejoin="round"/><circle cx="474" cy="39.8" r="16" fill="#a6a6a6"/><path d="M475.66,47.63 L495.88,29.42" stroke="#323232" stroke-width="3.0"/><path d="M468.05,45.15 L493.92,53.56" stroke="#323232" stroke-width="3.0"/><path d="M466.39,37.33 L472.05,63.93" stroke="#323232" stroke-width="3.0"/><path d="M472.34,31.97 L452.12,50.18" stroke="#323232" stroke-width="3.0"/><path d="M479.95,34.45 L454.08,26.04" stroke="#323232" stroke-width="3.0"/><path d="M481.61,42.27 L475.95,15.67" stroke="#323232" stroke-width="3.0"/><circle cx="474" cy="39.8" r="18.5" fill="none" stroke="#323232" stroke-width="5"/><rect x="522.2" y="20" width="1.5" height="39.6" fill="#555"/><path d="M559.93,32.38 A14.00,14.00 0 1 1 559.68,46.80" stroke="#a6a6a6" stroke-width="4" fill="none" stroke-linecap="round"/><polygon points="553.6,29.3 566.3,33.0 556.8,40.0" fill="#a6a6a6"/><path d="M631.87,32.38 A14.00,14.00 0 1 0 632.12,46.80" stroke="#a6a6a6" stroke-width="4" fill="none" stroke-linecap="round"/><polygon points="638.2,29.3 625.5,33.0 635.0,40.0" fill="#a6a6a6"/><rect x="1326.5" y="35.40" width="16.5" height="2.0" fill="#ececec"/><rect x="1326.5" y="42.30" width="16.5" height="2.0" fill="#ececec"/><rect x="1326.5" y="49.30" width="16.5" height="2.0" fill="#ececec"/><path d="M2124,34.6 L2130.6,40.7 L2124,46.8 M2134.6,34.6 L2141.2,40.7 L2134.6,46.8" stroke="#b4b4b4" stroke-width="3.1" fill="none" stroke-linecap="round" stroke-linejoin="round"/><circle cx="2504.6" cy="42.4" r="6.6" fill="none" stroke="#ececec" stroke-width="1.9"/><path d="M2509.4,47.4 L2516.8,54" stroke="#ececec" stroke-width="2.1" stroke-linecap="round"/><path d="M2519,44 L2523,48.6 L2527.4,44" stroke="#ececec" stroke-width="1.7" fill="none" stroke-linecap="round" stroke-linejoin="round"/><path d="M2826.2,39.8 L2834.0,47.6 L2841.8,39.8" stroke="#ececec" stroke-width="3.6" fill="none" stroke-linecap="round" stroke-linejoin="round"/><defs><linearGradient id="fg" x1="0" y1="0" x2="0" y2="1"><stop offset="0" stop-color="#7fd0fb"/><stop offset="1" stop-color="#58b9f3"/></linearGradient></defs><path d="M37,125.2 Q37,122.2 40,122.2 L49,122.2 Q51,122.2 52.2,123.6 L54,126 L68,126 Q71,126 71,129 L71,147 Q71,150 68,150 L40,150 Q37,150 37,147 Z" fill="#3ea1e0"/><rect x="37" y="127.4" width="34" height="22.6" rx="2.6" fill="url(#fg)"/><path d="M204.8,131.8 L212.6,138.3 L204.8,144.8" stroke="#c4c4c4" stroke-width="2.7" fill="none" stroke-linecap="round" stroke-linejoin="round"/><path d="M356.4,131.8 L364.1,138.3 L356.4,144.8" stroke="#c4c4c4" stroke-width="2.7" fill="none" stroke-linecap="round" stroke-linejoin="round"/><path d="M549.1,131.8 L556.9,138.3 L549.1,144.8" stroke="#c4c4c4" stroke-width="2.7" fill="none" stroke-linecap="round" stroke-linejoin="round"/><path d="M743.4,131.8 L751.1,138.3 L743.4,144.8" stroke="#c4c4c4" stroke-width="2.7" fill="none" stroke-linecap="round" stroke-linejoin="round"/><path d="M1063.3,131.8 L1071.1,138.3 L1063.3,144.8" stroke="#c4c4c4" stroke-width="2.7" fill="none" stroke-linecap="round" stroke-linejoin="round"/><rect x="2064" y="147.9" width="6" height="6" fill="#a4a4a4"/><rect x="2070" y="141.9" width="6" height="12" fill="#a4a4a4"/><rect x="2076" y="135.9" width="6" height="18" fill="#a4a4a4"/><rect x="2082" y="129.9" width="6" height="24" fill="#a4a4a4"/><rect x="2088" y="123.9" width="6" height="30" fill="#a4a4a4"/><defs><pattern id="ck" x="2126" y="122" width="8" height="8" patternUnits="userSpaceOnUse"><rect width="8" height="8" fill="#eeeeee"/><rect x="0" y="0" width="4" height="4" fill="#ababab"/><rect x="4" y="4" width="4" height="4" fill="#ababab"/></pattern></defs><polygon points="2126,154 2126,150 2130,150 2130,146 2134,146 2134,142 2138,142 2138,138 2142,138 2142,134 2146,134 2146,130 2150,130 2150,126 2154,126 2154,122 2158,122 2158,154" fill="url(#ck)"/><path d="M2163.8,135.8 L2172.0,143.7 L2180.2,135.8" stroke="#ececec" stroke-width="3.4" fill="none" stroke-linecap="round" stroke-linejoin="round"/><rect x="2205.2" y="114.3" width="1.5" height="47.2" fill="#555"/><path d="M2227.8,122.1 L2258.1,122.1 L2244.9,139 L2244.9,150.5 L2240,155.2 L2240,139 Z" fill="#ececec"/><circle cx="2255" cy="146.9" r="10.8" fill="#323232"/><circle cx="2255" cy="146.9" r="9.1" fill="#ececec"/><polygon points="2255.00,140.70 2256.63,145.06 2261.28,145.26 2257.64,148.16 2258.88,152.64 2255.00,150.07 2251.12,152.64 2252.36,148.16 2248.72,145.26 2253.37,145.06" fill="#323232" /><path d="M2267.8,135.8 L2275.9,143.7 L2284.0,135.8" stroke="#ececec" stroke-width="3.4" fill="none" stroke-linecap="round" stroke-linejoin="round"/><path d="M2552.0,133.9 L2560.0,141.7 L2568.0,133.9" stroke="#8e8e8e" stroke-width="3.4" fill="none" stroke-linecap="round" stroke-linejoin="round"/><path d="M2622,147 L2622,130.6 M2615.8,136.4 L2622,130 L2628.2,136.4" stroke="#ececec" stroke-width="3.6" fill="none" stroke-linecap="round" stroke-linejoin="round"/><rect x="2657.3" y="114.3" width="1.5" height="47.2" fill="#555"/><path d="M2682.8,149 L2682.8,125.2 L2692.5,125.2 L2696.5,129.4 L2708.5,129.4 L2708.5,134.5" stroke="#ececec" stroke-width="1.8" fill="none"/><path d="M2682.4,149.9 L2688.8,134.2 L2715.4,134.2 L2709.5,149.9 Z" fill="#ececec"/><circle cx="2707" cy="147.2" r="10.3" fill="#323232"/><circle cx="2707" cy="147.2" r="7.9" fill="none" stroke="#ececec" stroke-width="1.8"/><path d="M2707,141.6 L2707,147.4 L2710.2,150.6" stroke="#ececec" stroke-width="1.6" fill="none"/><path d="M2720.0,135.8 L2728.1,143.7 L2736.1,135.8" stroke="#ececec" stroke-width="3.4" fill="none" stroke-linecap="round" stroke-linejoin="round"/><path d="M2769.8,125.4 L2780.5,125.4 L2784.4,129.4 L2798.1,129.4 L2798.1,149 L2769.8,149 Z" fill="#9a9a9a"/><path d="M2771.6,127.2 L2779.6,127.2 L2782,129.9 L2771.6,129.9 Z" fill="#323232"/><path d="M2827.8,125.7 L2854.6,125.7 L2854.6,129.5 L2852.6,129.5 L2850,152.2 L2832.2,152.2 L2829.8,129.5 L2827.8,129.5 Z" fill="#9a9a9a"/><path d="M2835.8,125.7 L2835.8,123 L2846.4,123 L2846.4,125.7" stroke="#9a9a9a" stroke-width="1.7" fill="none"/><path d="M2835,132.6 L2836.4,148 M2841.2,132.6 L2841.2,148 M2847.4,132.6 L2846,148" stroke="#323232" stroke-width="1.7" fill="none"/><rect x="118" y="206.05" width="16.0" height="1.9" fill="#ececec"/><rect x="118" y="212.15" width="16.0" height="1.9" fill="#ececec"/><rect x="118" y="218.25" width="16.0" height="1.9" fill="#ececec"/><rect x="739.7" y="206.05" width="16.8" height="1.9" fill="#ececec"/><rect x="739.7" y="212.15" width="16.8" height="1.9" fill="#ececec"/><rect x="739.7" y="218.25" width="16.8" height="1.9" fill="#ececec"/><rect x="139.7" y="897.85" width="16.8" height="1.9" fill="#ececec"/><rect x="139.7" y="904.05" width="16.8" height="1.9" fill="#ececec"/><rect x="139.7" y="910.35" width="16.8" height="1.9" fill="#ececec"/><rect x="2301.7" y="221.85" width="16.5" height="1.9" fill="#ececec"/><rect x="2301.7" y="228.15" width="16.5" height="1.9" fill="#ececec"/><rect x="2301.7" y="234.35" width="16.5" height="1.9" fill="#ececec"/><rect x="1345.4" y="894.05" width="16.8" height="1.9" fill="#ececec"/><rect x="1345.4" y="900.25" width="16.8" height="1.9" fill="#ececec"/><rect x="1345.4" y="906.45" width="16.8" height="1.9" fill="#ececec"/><path d="M20,260.2 L28,268 L20,275.8" stroke="#ececec" stroke-width="3.9" fill="none" stroke-linecap="round" stroke-linejoin="round"/><path d="M20,302.2 L28,310 L20,317.8" stroke="#ececec" stroke-width="3.9" fill="none" stroke-linecap="round" stroke-linejoin="round"/><rect x="59.9" y="262" width="20.2" height="13.8" fill="#050507"/><rect x="59.9" y="263.8" width="20.2" height="10.3" fill="#4a9ce6"/><rect x="62" y="276.8" width="16" height="1" fill="#5a5a5a"/><rect x="55.8" y="297.8" width="10.2" height="3.2" fill="#3da0e2"/><rect x="55.8" y="299.9" width="28.3" height="22" fill="#6cc7f8"/><rect x="55.8" y="299.9" width="28.3" height="2.1" fill="#2f93dc"/><rect x="66.6" y="312.2" width="7.1" height="2.2" fill="#3b9fe0"/><rect x="64" y="314.3" width="12" height="1.6" fill="#3b9fe0"/><polygon points="954.80,768.35 958.00,776.91 967.13,777.31 959.98,783.00 962.42,791.81 954.80,786.76 947.18,791.81 949.62,783.00 942.47,777.31 951.60,776.91" fill="#8b8b8b"/><polygon points="980.40,768.35 983.60,776.91 992.73,777.31 985.58,783.00 988.02,791.81 980.40,786.76 972.78,791.81 975.22,783.00 968.07,777.31 977.20,776.91" fill="#8b8b8b"/><polygon points="1006.00,768.35 1009.20,776.91 1018.33,777.31 1011.18,783.00 1013.62,791.81 1006.00,786.76 998.38,791.81 1000.82,783.00 993.67,777.31 1002.80,776.91" fill="#8b8b8b"/><polygon points="1031.60,768.35 1034.80,776.91 1043.93,777.31 1036.78,783.00 1039.22,791.81 1031.60,786.76 1023.98,791.81 1026.42,783.00 1019.27,777.31 1028.40,776.91" fill="#8b8b8b"/><polygon points="1057.20,768.35 1060.40,776.91 1069.53,777.31 1062.38,783.00 1064.82,791.81 1057.20,786.76 1049.58,791.81 1052.02,783.00 1044.87,777.31 1054.00,776.91" fill="#8b8b8b"/><path d="M1305.2,901 H1321 M1313.1,893.1 V908.9" stroke="#ececec" stroke-width="2.9"/><path d="M734,982.8 L734,967 M727.4,973.2 L734,966.4 L740.6,973.2" stroke="#c8c8c8" stroke-width="3.5" fill="none" stroke-linecap="round" stroke-linejoin="round"/><circle cx="1728" cy="1246.2" r="9.1" fill="none" stroke="#7c7c7c" stroke-width="2.2"/><path d="M1720.9,1239.1 L1735.1,1253.3" stroke="#7c7c7c" stroke-width="2.2"/><polygon points="1756.40,1233.74 1759.70,1242.56 1769.11,1242.97 1761.74,1248.84 1764.25,1257.91 1756.40,1252.71 1748.55,1257.91 1751.06,1248.84 1743.69,1242.97 1753.10,1242.56" fill="#858585"/><polygon points="1782.00,1233.74 1785.30,1242.56 1794.71,1242.97 1787.34,1248.84 1789.85,1257.91 1782.00,1252.71 1774.15,1257.91 1776.66,1248.84 1769.29,1242.97 1778.70,1242.56" fill="#858585"/><polygon points="1807.60,1233.74 1810.90,1242.56 1820.31,1242.97 1812.94,1248.84 1815.45,1257.91 1807.60,1252.71 1799.75,1257.91 1802.26,1248.84 1794.89,1242.97 1804.30,1242.56" fill="#858585"/><polygon points="1833.20,1233.74 1836.50,1242.56 1845.91,1242.97 1838.54,1248.84 1841.05,1257.91 1833.20,1252.71 1825.35,1257.91 1827.86,1248.84 1820.49,1242.97 1829.90,1242.56" fill="#858585"/><polygon points="1858.80,1233.74 1862.10,1242.56 1871.51,1242.97 1864.14,1248.84 1866.65,1257.91 1858.80,1252.71 1850.95,1257.91 1853.46,1248.84 1846.09,1242.97 1855.50,1242.56" fill="#858585"/><circle cx="1728" cy="1368.0" r="9.1" fill="none" stroke="#7c7c7c" stroke-width="2.2"/><path d="M1720.9,1360.9 L1735.1,1375.1" stroke="#7c7c7c" stroke-width="2.2"/><polygon points="1756.40,1355.54 1759.70,1364.36 1769.11,1364.77 1761.74,1370.64 1764.25,1379.71 1756.40,1374.51 1748.55,1379.71 1751.06,1370.64 1743.69,1364.77 1753.10,1364.36" fill="#858585"/><polygon points="1782.00,1355.54 1785.30,1364.36 1794.71,1364.77 1787.34,1370.64 1789.85,1379.71 1782.00,1374.51 1774.15,1379.71 1776.66,1370.64 1769.29,1364.77 1778.70,1364.36" fill="#858585"/><polygon points="1807.60,1355.54 1810.90,1364.36 1820.31,1364.77 1812.94,1370.64 1815.45,1379.71 1807.60,1374.51 1799.75,1379.71 1802.26,1370.64 1794.89,1364.77 1804.30,1364.36" fill="#858585"/><polygon points="1833.20,1355.54 1836.50,1364.36 1845.91,1364.77 1838.54,1370.64 1841.05,1379.71 1833.20,1374.51 1825.35,1379.71 1827.86,1370.64 1820.49,1364.77 1829.90,1364.36" fill="#858585"/><polygon points="1858.80,1355.54 1862.10,1364.36 1871.51,1364.77 1864.14,1370.64 1866.65,1379.71 1858.80,1374.51 1850.95,1379.71 1853.46,1370.64 1846.09,1364.77 1855.50,1364.36" fill="#858585"/><rect x="1417.4" y="1489.4" width="21.6" height="4.4" rx="1" fill="#ececec"/><rect x="1480.3" y="1489.7" width="19.4" height="3.8" rx="1.9" fill="#555"/><rect x="1544.3" y="1489.7" width="179.2" height="3.8" rx="1.9" fill="#555"/><circle cx="1521.7" cy="1491.7" r="12.2" fill="none" stroke="#d4d4d4" stroke-width="3.6"/><path d="M1767,1491.9 H1784.6 M1775.8,1483.2 V1500.6" stroke="#ececec" stroke-width="4.2" stroke-linecap="round"/><rect x="1811.2" y="1468.3" width="1.4" height="47" fill="#555"/><rect x="1891.1" y="1468.3" width="1.4" height="47" fill="#555"/><rect x="2103.2" y="1468.3" width="1.4" height="47" fill="#555"/><path d="M1832.8,1478.8 H1869.4 V1502.6 H1832.8 Z M1832.8,1490.7 H1869.4 M1845,1478.8 V1502.6 M1857.2,1478.8 V1502.6" stroke="#b0b0b0" stroke-width="1.5" fill="none"/><rect x="1913.8" y="1480.0" width="10" height="10.2" fill="#b0b0b0"/><rect x="1925.9" y="1480.0" width="10" height="10.2" fill="#b0b0b0"/><rect x="1938.0" y="1480.0" width="10" height="10.2" fill="#b0b0b0"/><rect x="1913.8" y="1491.6" width="10" height="10.2" fill="#b0b0b0"/><rect x="1925.9" y="1491.6" width="10" height="10.2" fill="#b0b0b0"/><rect x="1938.0" y="1491.6" width="10" height="10.2" fill="#b0b0b0"/><rect x="1980" y="1482" width="19.6" height="18.2" fill="#b0b0b0"/><rect x="2002.4" y="1482.2" width="11.8" height="3.9" fill="#b0b0b0"/><rect x="2002.4" y="1489.2" width="11.8" height="3.9" fill="#b0b0b0"/><rect x="2002.4" y="1496.2" width="11.8" height="3.9" fill="#b0b0b0"/><rect x="2048" y="1482" width="7.6" height="7.8" rx="1" fill="#cacaca"/><rect x="2048" y="1492.2" width="7.6" height="7.8" rx="1" fill="#cacaca"/><rect x="2059" y="1484.2" width="21" height="3.5" rx="1" fill="#cacaca"/><rect x="2059" y="1494.2" width="21" height="3.5" rx="1" fill="#cacaca"/><path d="M2132.3,1487.8 L2140.0,1495.3 L2147.7,1487.8" stroke="#b0b0b0" stroke-width="3.2" fill="none" stroke-linecap="round" stroke-linejoin="round"/><path d="M66.9,965.8 C65.9,962.9 62.5,962.5 60.6,965.5 C59,968.3 58.4,972 57.4,976 L55,986.2 C54,990.6 50.4,992.5 46.6,990.9 C45.3,990.3 44.9,989 45.5,988" stroke="#e8e8e8" stroke-width="2" fill="none" stroke-linecap="round"/><path d="M51.6,973.4 H65.4" stroke="#e8e8e8" stroke-width="1.8"/><path d="M67.4,988 L75,966.8" stroke="#e8e8e8" stroke-width="2"/><rect x="84.4" y="979.8" width="5.6" height="2" fill="#e8e8e8"/><rect x="91.30000000000001" y="979.8" width="5.6" height="2" fill="#e8e8e8"/><rect x="148.5" y="979.8" width="5.6" height="2" fill="#e8e8e8"/><rect x="155.4" y="979.8" width="5.6" height="2" fill="#e8e8e8"/><rect x="148.5" y="1023.9000000000001" width="5.6" height="2" fill="#e8e8e8"/><rect x="155.4" y="1023.9000000000001" width="5.6" height="2" fill="#e8e8e8"/><rect x="192.6" y="1067.9" width="5.6" height="2" fill="#e8e8e8"/><rect x="199.5" y="1067.9" width="5.6" height="2" fill="#e8e8e8"/><rect x="292.5" y="979.8" width="5.6" height="2" fill="#e8e8e8"/><rect x="299.4" y="979.8" width="5.6" height="2" fill="#e8e8e8"/><rect x="292.5" y="1023.9000000000001" width="5.6" height="2" fill="#e8e8e8"/><rect x="299.4" y="1023.9000000000001" width="5.6" height="2" fill="#e8e8e8"/><rect x="292.5" y="1067.9" width="5.6" height="2" fill="#e8e8e8"/><rect x="299.4" y="1067.9" width="5.6" height="2" fill="#e8e8e8"/><rect x="348.4" y="1023.9000000000001" width="5.6" height="2" fill="#e8e8e8"/><rect x="355.29999999999995" y="1023.9000000000001" width="5.6" height="2" fill="#e8e8e8"/><rect x="348.4" y="1067.9" width="5.6" height="2" fill="#e8e8e8"/><rect x="355.29999999999995" y="1067.9" width="5.6" height="2" fill="#e8e8e8"/><path d="M60.2,1007 H42.4 Q40.9,1007 40.9,1008.5 V1020 M40.9,1023.8 V1035.5 Q40.9,1037 42.4,1037 H60.2 M63.8,1007 H81.6 Q83.1,1007 83.1,1008.5 V1020 M83.1,1023.8 V1035.5 Q83.1,1037 81.6,1037 H63.8" stroke="#ececec" stroke-width="1.8" fill="none"/><rect x="43.6" y="1009.9" width="36.6" height="24.4" fill="#e6e6e6"/><circle cx="61.9" cy="1021.9" r="9.7" fill="#3b3b3b"/><rect x="61.1" y="1009" width="1.7" height="26" fill="#3b3b3b"/><rect x="43" y="1021.2" width="38" height="1.5" fill="#3b3b3b"/><circle cx="61.9" cy="1021.9" r="7" fill="#e6e6e6"/><path d="M61.9,1049.8 C56.6,1049.8 53.9,1053.8 53.9,1058.6 C53.9,1062.4 55.6,1065.6 57.6,1067.4 C57.6,1070.6 56.8,1071.6 52,1073.2 C47.6,1074.8 45.6,1077.6 45.6,1082.3 L78.3,1082.3 C78.3,1077.6 76.2,1074.8 71.8,1073.2 C67,1071.6 66.2,1070.6 66.2,1067.4 C68.2,1065.6 70,1062.4 70,1058.6 C70,1053.8 67.2,1049.8 61.9,1049.8 Z" fill="#e6e6e6"/><path d="M533,1270.2 H523.4 V1290.8 H545.8 V1282.4" stroke="#ececec" stroke-width="2.3" fill="none"/><path d="M534.6,1280 L545,1269.6" stroke="#ececec" stroke-width="2.3" fill="none"/><polygon points="538.4,1267.6 547.2,1267.6 547.2,1276.4" fill="#ececec"/><path d="M30.0,1328.7 L38.0,1336.1 L46.0,1328.7" stroke="#ececec" stroke-width="3.4" fill="none" stroke-linecap="round" stroke-linejoin="round"/><path d="M469.4,1482.2 L488.4,1500.4 M488.4,1482.2 L469.4,1500.4" stroke="#b0b0b0" stroke-width="2.8" fill="none"/><path d="M535.8,1491.8 L542.6,1498.6 L555.8,1482.8" stroke="#a8a8a8" stroke-width="2.9" fill="none"/><circle cx="2209.8" cy="322" r="5.3" fill="none" stroke="#ececec" stroke-width="1.9"/><path d="M2213.8,326 L2219.4,331.8" stroke="#ececec" stroke-width="2.6" stroke-linecap="round"/><path d="M2204.4,408.1 H2223.8 M2214.1,398.4 V417.8" stroke="#e2e2e2" stroke-width="4.4" stroke-linecap="round"/><path d="M2211,1510 C2207.6,1510 2206.6,1507.6 2206.6,1505.8 C2206.6,1503.2 2208.6,1501.4 2211.4,1501.2 C2211.8,1498.6 2213.8,1497.2 2216.2,1497.4 C2217,1492.6 2220.6,1489.8 2224.6,1489.8 C2229.4,1489.8 2232.6,1493.4 2232.8,1497.8 C2236.4,1498.2 2239,1500.6 2239,1504 C2239,1507.4 2236.4,1510 2233.4,1510 Z" fill="#ffffff"/><path d="M2814.8,1500 H2835.2 M2825,1489.8 V1510.2" stroke="#e8e8e8" stroke-width="4" stroke-linecap="round"/><polygon points="2835,1508 2843.4,1508 2839.2,1514" fill="#dcdcdc"/></svg>
<span class="t" style="left:1032.67px;top:29px;font-size:22.5px;line-height:29px;color:#d4d4d4;transform:scaleX(0.9280);-webkit-text-stroke:0.45px #d4d4d4;">Essentials</span><span class="t" style="left:1216.53px;top:29px;font-size:22.5px;line-height:29px;color:#ffffff;transform:scaleX(0.9702);-webkit-text-stroke:0.45px #ffffff;">Libraries</span><span class="t" style="left:1388.39px;top:29px;font-size:22.5px;line-height:29px;color:#d4d4d4;transform:scaleX(1.0063);-webkit-text-stroke:0.45px #d4d4d4;">Filmstrip</span><span class="t" style="left:1562.49px;top:29px;font-size:22.5px;line-height:29px;color:#d4d4d4;transform:scaleX(1.0135);-webkit-text-stroke:0.45px #d4d4d4;">Output</span><span class="t" style="left:1720.73px;top:29px;font-size:22.5px;line-height:29px;color:#d4d4d4;transform:scaleX(0.9732);-webkit-text-stroke:0.45px #d4d4d4;">Metadata</span><span class="t" style="left:1902.80px;top:29px;font-size:22.5px;line-height:29px;color:#d4d4d4;transform:scaleX(1.0145);-webkit-text-stroke:0.45px #d4d4d4;">Workflow</span><span class="t" style="left:2542.00px;top:32px;font-size:22.5px;line-height:29px;color:#bdbdbd;transform:scaleX(0.9178);-webkit-text-stroke:0.45px #bdbdbd;font-style:italic;">Bridge Search: Current .</span><span class="t" style="left:78.41px;top:126px;font-size:22.5px;line-height:29px;color:#cfcfcf;transform:scaleX(0.9888);-webkit-text-stroke:0.45px #cfcfcf;">Computer</span><span class="t" style="left:239.44px;top:126px;font-size:22.5px;line-height:29px;color:#cfcfcf;transform:scaleX(0.9624);-webkit-text-stroke:0.45px #cfcfcf;">DMLaCie</span><span class="t" style="left:393.02px;top:126px;font-size:22.5px;line-height:29px;color:#cfcfcf;transform:scaleX(0.9839);-webkit-text-stroke:0.45px #cfcfcf;">Photography</span><span class="t" style="left:586.07px;top:126px;font-size:22.5px;line-height:29px;color:#cfcfcf;transform:scaleX(0.9306);-webkit-text-stroke:0.45px #cfcfcf;">Faroe Islands</span><span class="t" style="left:782.05px;top:126px;font-size:22.5px;line-height:29px;color:#cfcfcf;transform:scaleX(0.9535);-webkit-text-stroke:0.45px #cfcfcf;">Faroe Islands March 2024</span><span class="t" style="left:1107.02px;top:126px;font-size:22.5px;line-height:29px;color:#ffffff;transform:scaleX(0.9783);-webkit-text-stroke:0.45px #ffffff;">Edited (Prints)</span><span class="t" style="left:2325.03px;top:125px;font-size:22.5px;line-height:29px;color:#f2f2f2;transform:scaleX(0.9696);-webkit-text-stroke:0.45px #f2f2f2;">Sort by Type</span><span class="t" style="left:25.58px;top:198px;font-size:23.5px;line-height:30px;color:#ffffff;transform:scaleX(0.9163);-webkit-text-stroke:0.65px #fff;">Folders</span><span class="t" style="left:641.58px;top:198px;font-size:23.5px;line-height:30px;color:#ffffff;transform:scaleX(0.9221);-webkit-text-stroke:0.65px #fff;">Preview</span><span class="t" style="left:25.57px;top:890px;font-size:23.5px;line-height:30px;color:#ffffff;transform:scaleX(0.9284);-webkit-text-stroke:0.65px #fff;">Metadata</span><span class="t" style="left:2197.67px;top:214px;font-size:23.5px;line-height:30px;color:#ffffff;transform:scaleX(0.9290);-webkit-text-stroke:0.65px #fff;">Libraries</span><span class="t" style="left:94.61px;top:256px;font-size:22.5px;line-height:29px;color:#dcdcdc;transform:scaleX(0.9888);-webkit-text-stroke:0.45px #dcdcdc;">Computer</span><span class="t" style="left:95.41px;top:298px;font-size:22.5px;line-height:29px;color:#dcdcdc;transform:scaleX(0.9873);-webkit-text-stroke:0.45px #dcdcdc;">Desktop</span><span class="t" style="left:867.02px;top:801px;font-size:22.5px;line-height:29px;color:#ececec;transform:scaleX(0.9781);-webkit-text-stroke:0.45px #ececec;">Faroe Islands_Mountaintif.tif</span><span class="t" style="left:1689.56px;top:801px;font-size:22.5px;line-height:29px;color:#8c8c8c;transform:scaleX(0.9352);-webkit-text-stroke:0.45px #8c8c8c;">DSCF6812 copy.tif</span><span class="t" style="left:681.02px;top:886px;font-size:22.5px;line-height:29px;color:#c8c8c8;transform:scaleX(0.9809);-webkit-text-stroke:0.45px #c8c8c8;">Content: dannymaiorca</span><span class="t" style="left:1065.03px;top:886px;font-size:22.5px;line-height:29px;color:#ffffff;transform:scaleX(0.9739);-webkit-text-stroke:0.45px #ffffff;">Content: Edited (Prints)</span><span class="t" style="left:651.60px;top:961px;font-size:22.5px;line-height:29px;color:#cdcdcd;transform:scaleX(0.8974);-webkit-text-stroke:0.45px #cdcdcd;">Name</span><span class="t" style="left:1015.74px;top:961px;font-size:22.5px;line-height:29px;color:#cdcdcd;transform:scaleX(0.8631);-webkit-text-stroke:0.45px #cdcdcd;">Date Created</span><span class="t" style="left:1257.38px;top:961px;font-size:22.5px;line-height:29px;color:#cdcdcd;transform:scaleX(0.8212);-webkit-text-stroke:0.45px #cdcdcd;">Size</span><span class="t" style="left:1499.80px;top:961px;font-size:22.5px;line-height:29px;color:#cdcdcd;transform:scaleX(0.8847);-webkit-text-stroke:0.45px #cdcdcd;">Type</span><span class="t" style="left:1741.52px;top:961px;font-size:22.5px;line-height:29px;color:#cdcdcd;transform:scaleX(0.8815);-webkit-text-stroke:0.45px #cdcdcd;">Rating</span><span class="t" style="left:1982.78px;top:961px;font-size:22.5px;line-height:29px;color:#cdcdcd;transform:scaleX(0.9198);-webkit-text-stroke:0.45px #cdcdcd;">Label</span><span class="t" style="left:660.85px;top:1481px;font-size:22.5px;line-height:29px;color:#e4e4e4;transform:scaleX(0.9547);-webkit-text-stroke:0.45px #e4e4e4;">9 items, 2 selected - 21.70 MB</span><span class="t" style="left:95.43px;top:1130px;font-size:22.5px;line-height:29px;color:#a9a9a9;transform:scaleX(0.9715);-webkit-text-stroke:0.45px #a9a9a9;">Color Profile</span><span class="t" style="left:95.43px;top:1176px;font-size:22.5px;line-height:29px;color:#a9a9a9;transform:scaleX(0.9697);-webkit-text-stroke:0.45px #a9a9a9;">Rating</span><span class="t" style="left:95.44px;top:1221px;font-size:22.5px;line-height:29px;color:#a9a9a9;transform:scaleX(0.9591);-webkit-text-stroke:0.45px #a9a9a9;">Supports XMP</span><span class="t" style="left:95.44px;top:1267px;font-size:22.5px;line-height:29px;color:#a9a9a9;transform:scaleX(0.9645);-webkit-text-stroke:0.45px #a9a9a9;">Content Credentials</span><span class="t" style="left:95.45px;top:1374px;font-size:22.5px;line-height:29px;color:#a9a9a9;transform:scaleX(0.9472);-webkit-text-stroke:0.45px #a9a9a9;">Creator</span><span class="t" style="left:95.45px;top:1424px;font-size:22.5px;line-height:29px;color:#a9a9a9;transform:scaleX(0.9476);-webkit-text-stroke:0.45px #a9a9a9;">Creator: Job Title</span><span class="t" style="left:350.00px;top:1130px;font-size:22.5px;line-height:29px;color:#ececec;transform:scaleX(0.9369);-webkit-text-stroke:0.45px #ececec;">Adobe RGB (<span style="letter-spacing:-2.6px">...</span></span><span class="t" style="left:348.98px;top:1176px;font-size:22.5px;line-height:29px;color:#ececec;transform:scaleX(1.0165);-webkit-text-stroke:0.45px #ececec;">(Multiple val<span style="letter-spacing:-2.6px">...</span></span><span class="t" style="left:350.00px;top:1221px;font-size:22.5px;line-height:29px;color:#ececec;transform:scaleX(0.8504);-webkit-text-stroke:0.45px #ececec;">Yes</span><span class="t" style="left:63.00px;top:1320px;font-size:22.5px;line-height:29px;color:#ffffff;transform:scaleX(0.9002);-webkit-text-stroke:0.45px #ffffff;">IPTC Core</span><span class="t" style="left:149.81px;top:1050px;font-size:24px;line-height:31px;color:#e8e8e8;transform:scaleX(0.9437);-webkit-text-stroke:0.5px #e8e8e8;">ISO</span><span class="t" style="left:2241.00px;top:310px;font-size:21.5px;line-height:28px;color:#7c7c7c;transform:scaleX(0.9990);-webkit-text-stroke:0.05px #7c7c7c;font-style:italic;letter-spacing:0.726px;">Search all libraries</span><span class="t" style="left:2236.90px;top:395px;font-size:21.5px;line-height:28px;color:#e2e2e2;transform:scaleX(0.9990);-webkit-text-stroke:0.1px #e2e2e2;font-weight:700;letter-spacing:1.009px;">Create new library</span><span class="t" style="left:2217.80px;top:469px;font-size:21.5px;line-height:28px;color:#dadada;transform:scaleX(0.9990);-webkit-text-stroke:0.15px #dadada;letter-spacing:1.058px;">Copenhagen Winter</span><span class="t" style="left:2217.80px;top:545px;font-size:21.5px;line-height:28px;color:#dadada;transform:scaleX(0.9990);-webkit-text-stroke:0.15px #dadada;letter-spacing:1.268px;">MyLooks</span><span class="t" style="left:2217.80px;top:621px;font-size:21.5px;line-height:28px;color:#dadada;transform:scaleX(0.9990);-webkit-text-stroke:0.15px #dadada;letter-spacing:1.154px;">MyRecents</span><span class="t" style="left:2217.80px;top:697px;font-size:21.5px;line-height:28px;color:#dadada;transform:scaleX(0.9990);-webkit-text-stroke:0.15px #dadada;letter-spacing:1.120px;">MyThemes</span><span class="t" style="left:2218.80px;top:773px;font-size:21.5px;line-height:28px;color:#dadada;transform:scaleX(0.9990);-webkit-text-stroke:0.15px #dadada;letter-spacing:1.114px;">Stock Templates</span><span class="t" style="left:2218.80px;top:849px;font-size:21.5px;line-height:28px;color:#dadada;transform:scaleX(0.9990);-webkit-text-stroke:0.15px #dadada;letter-spacing:0.886px;">Your Library</span><span class="t" style="left:2387.40px;top:933px;font-size:22.5px;line-height:29px;color:#808080;transform:scaleX(0.9990);-webkit-text-stroke:0.1px #808080;text-decoration:underline;text-decoration-thickness:1.5px;text-underline-offset:2px;letter-spacing:0.436px;">Browse shared libraries</span><span class="t" style="left:2369.20px;top:971px;font-size:22.5px;line-height:29px;color:#808080;transform:scaleX(0.9990);-webkit-text-stroke:0.1px #808080;text-decoration:underline;text-decoration-thickness:1.5px;text-underline-offset:2px;letter-spacing:0.566px;">Go to Stock &amp; Marketplace</span><span class="t" style="left:137.96px;top:237px;font-size:25.5px;line-height:32px;color:#1f1f1f;transform:scaleX(1.0383);-webkit-text-stroke:0.45px #1f1f1f;z-index:30;">Close Panel</span><span class="t" style="left:137.94px;top:281px;font-size:25.5px;line-height:32px;color:#1f1f1f;transform:scaleX(1.0570);-webkit-text-stroke:0.45px #1f1f1f;z-index:30;">Undock Panel</span><span class="t" style="left:137.96px;top:325px;font-size:25.5px;line-height:32px;color:#9b9791;transform:scaleX(1.0437);-webkit-text-stroke:0.45px #9b9791;z-index:30;">Close Other Panels in Group</span><span class="t" style="left:136.88px;top:369px;font-size:25.5px;line-height:32px;color:#1f1f1f;transform:scaleX(1.0578);-webkit-text-stroke:0.45px #1f1f1f;z-index:30;">Panel Group Settings</span><span class="t" style="left:607.76px;top:368px;font-size:25.5px;line-height:32px;color:#1f1f1f;transform:scaleX(1.0351);-webkit-text-stroke:0.45px #1f1f1f;z-index:40;">Close Panel Group</span><span class="t" style="left:607.75px;top:412px;font-size:25.5px;line-height:32px;color:#1f1f1f;transform:scaleX(1.0465);-webkit-text-stroke:0.45px #1f1f1f;z-index:40;">Undock Panel Group</span><span class="t" style="left:606.71px;top:457px;font-size:25.5px;line-height:32px;color:#1f1f1f;transform:scaleX(1.0432);-webkit-text-stroke:0.45px #1f1f1f;z-index:40;">Maximize Panel Group</span><span class="t" style="left:607.76px;top:523px;font-size:25.5px;line-height:32px;color:#1f1f1f;transform:scaleX(1.0430);-webkit-text-stroke:0.45px #1f1f1f;z-index:40;">Stacked Panel Group</span><span class="t" style="left:607.76px;top:567px;font-size:25.5px;line-height:32px;color:#9b9791;transform:scaleX(1.0398);-webkit-text-stroke:0.45px #9b9791;z-index:40;">Solo Panels in Stack</span><span class="t" style="left:607.76px;top:611px;font-size:25.5px;line-height:32px;color:#1f1f1f;transform:scaleX(1.0442);-webkit-text-stroke:0.45px #1f1f1f;z-index:40;">Small Tabs</span>
<div class="b" style="z-index:20;left:110px;top:220px;width:460px;height:196px;border-radius:11px;background:linear-gradient(180deg,#cac7bf,#c5c1ba);box-shadow:0 0 0 1px rgba(0,0,0,.28),0 10px 30px rgba(0,0,0,.42)"></div>
<div class="b" style="z-index:21;left:120px;top:362px;width:439px;height:44px;border-radius:8px;background:#aba7a2"></div>
<div class="b" style="z-index:35;left:560px;top:352px;width:346px;height:306px;border-radius:11px;background:linear-gradient(100deg,#c6c3bb 20%,#d3cac0 100%);box-shadow:0 0 0 1px rgba(0,0,0,.28),0 10px 30px rgba(0,0,0,.42)"></div>
<div class="b" style="z-index:36;left:588px;top:504.4px;width:290px;height:1.6px;background:#b1ada6"></div>
<svg class="b" style="left:0;top:0;z-index:45;pointer-events:none" width="2880" height="1524" viewBox="0 0 2880 1524"><path d="M529.3,378.4 L536.8,385.1 L529.3,391.9" stroke="#262626" stroke-width="3.2" fill="none" stroke-linecap="round" stroke-linejoin="round"/><path d="M582.6,627.6 L587.6,634 L598.4,620" stroke="#262626" stroke-width="3.3" fill="none" stroke-linecap="round" stroke-linejoin="round"/></svg>
</div></body></html>
